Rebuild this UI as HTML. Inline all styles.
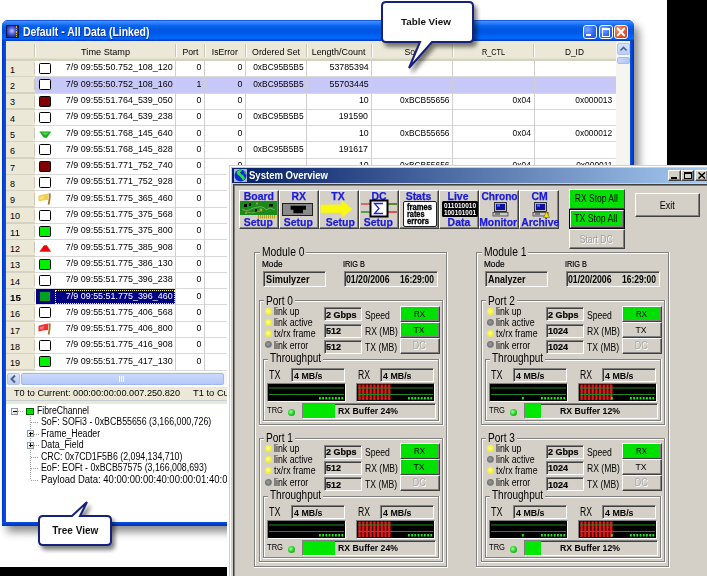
<!DOCTYPE html>
<html><head><meta charset="utf-8"><style>
html,body{margin:0;padding:0}
body{width:707px;height:576px;position:relative;overflow:hidden;background:#fff;font-family:"Liberation Sans",sans-serif}
body div{position:absolute}
.t{white-space:nowrap;line-height:1}
</style></head><body>
<div style="left:667px;top:0px;width:40px;height:165px;background:#000"></div>
<div style="left:0px;top:567px;width:227px;height:9px;background:#000"></div>
<div style="left:2px;top:20px;width:632px;height:506px;border-radius:6px 6px 0 0;box-shadow:5px 6px 9px rgba(0,0,0,0.45);background:#0a47e0"></div>
<div style="left:2px;top:20px;width:632px;height:21px;border-radius:6px 6px 0 0;background:linear-gradient(to bottom,#0a3ed8 0px,#3a90ff 1.5px,#2a80fa 3px,#0a62ec 6px,#0055e2 10px,#0058e6 13px,#0064f6 16px,#0066fa 18.5px,#0048d8 20px,#0038c0 21px)"></div>
<div style="left:2px;top:41px;width:4px;height:485px;background:linear-gradient(to right,#0036c8,#0a52e8)"></div>
<div style="left:630px;top:41px;width:4px;height:485px;background:linear-gradient(to right,#0a52e8,#0030b0)"></div>
<div style="left:2px;top:522px;width:632px;height:4px;background:linear-gradient(to bottom,#0a52e8,#0030b0)"></div>
<div style="left:6px;top:25px;width:12.5px;height:13px;background:radial-gradient(circle at 45% 45%,#c0d0ff 0%,#5868e0 35%,#2030a0 70%,#101c60 100%);border:1px solid #0a1050;box-sizing:border-box"></div>
<div style="left:15.5px;top:26px;width:1.5px;height:11px;background:repeating-linear-gradient(to bottom,#d8c020 0 1.5px,#304080 1.5px 2.5px)"></div>
<div class="t" style="left:22.50px;top:26.12px;font-size:12.5px;font-weight:bold;color:#fff;transform:scaleX(0.834);transform-origin:left;text-shadow:0.6px 0.6px 0 #0a2a90;">Default - All Data (Linked)</div>
<div style="left:583px;top:25px;width:14px;height:14px;border:1px solid #fff;border-radius:3px;box-sizing:border-box;background:radial-gradient(circle at 30% 30%,#7aa8ff,#2a64f0 60%,#1a4cd8)"></div>
<div style="left:586px;top:33.8px;width:5px;height:2.5px;background:#fff"></div>
<div style="left:599px;top:25px;width:13.5px;height:14px;border:1px solid #fff;border-radius:3px;box-sizing:border-box;background:radial-gradient(circle at 30% 30%,#7aa8ff,#2a64f0 60%,#1a4cd8)"></div>
<div style="left:601.5px;top:27.5px;width:8.5px;height:9px;border:1px solid #fff;border-top-width:2.5px;box-sizing:border-box"></div>
<div style="left:614.2px;top:25px;width:13.8px;height:14px;border:1px solid #fff;border-radius:3px;box-sizing:border-box;background:radial-gradient(circle at 30% 30%,#f09878,#e05028 60%,#c83818)"></div>
<svg style="position:absolute;left:614.2px;top:25px" width="14" height="14"><path d="M3.2 3 L10.8 11 M10.8 3 L3.2 11" stroke="#fff" stroke-width="1.9"/></svg>
<div style="left:6px;top:41px;width:624px;height:481px;background:#fff"></div>
<div style="left:6px;top:41px;width:610px;height:20px;background:#ebe8d7;border-bottom:2px solid #d6d2c2;box-sizing:border-box"></div>
<div style="left:6px;top:58px;width:610px;height:1px;background:#e2dfcf"></div>
<div style="left:34px;top:44px;width:1px;height:13px;background:#cac6b4"></div>
<div style="left:35px;top:44px;width:1px;height:13px;background:#fff"></div>
<div style="left:174.5px;top:44px;width:1px;height:13px;background:#cac6b4"></div>
<div style="left:175.5px;top:44px;width:1px;height:13px;background:#fff"></div>
<div style="left:203.5px;top:44px;width:1px;height:13px;background:#cac6b4"></div>
<div style="left:204.5px;top:44px;width:1px;height:13px;background:#fff"></div>
<div style="left:244.5px;top:44px;width:1px;height:13px;background:#cac6b4"></div>
<div style="left:245.5px;top:44px;width:1px;height:13px;background:#fff"></div>
<div style="left:305.5px;top:44px;width:1px;height:13px;background:#cac6b4"></div>
<div style="left:306.5px;top:44px;width:1px;height:13px;background:#fff"></div>
<div style="left:370.5px;top:44px;width:1px;height:13px;background:#cac6b4"></div>
<div style="left:371.5px;top:44px;width:1px;height:13px;background:#fff"></div>
<div style="left:451.5px;top:44px;width:1px;height:13px;background:#cac6b4"></div>
<div style="left:452.5px;top:44px;width:1px;height:13px;background:#fff"></div>
<div style="left:533px;top:44px;width:1px;height:13px;background:#cac6b4"></div>
<div style="left:534px;top:44px;width:1px;height:13px;background:#fff"></div>
<div class="t" style="left:80.63px;top:47.81px;font-size:9.2px;color:#000;transform:scaleX(0.995);transform-origin:center;">Time Stamp</div>
<div class="t" style="left:181.56px;top:47.81px;font-size:9.2px;color:#000;transform:scaleX(0.948);transform-origin:center;">Port</div>
<div class="t" style="left:211.20px;top:47.81px;font-size:9.2px;color:#000;transform:scaleX(0.942);transform-origin:center;">IsError</div>
<div class="t" style="left:250.94px;top:47.81px;font-size:9.2px;color:#000;transform:scaleX(0.958);transform-origin:center;">Ordered Set</div>
<div class="t" style="left:311.38px;top:47.81px;font-size:9.2px;color:#000;transform:scaleX(0.977);transform-origin:center;">Length/Count</div>
<div class="t" style="left:403.56px;top:47.81px;font-size:9.2px;color:#000;transform:scaleX(0.948);transform-origin:center;">SoF</div>
<div class="t" style="left:478.68px;top:47.81px;font-size:9.2px;color:#000;transform:scaleX(0.789);transform-origin:center;">R_CTL</div>
<div class="t" style="left:564.27px;top:47.81px;font-size:9.2px;color:#000;transform:scaleX(0.906);transform-origin:center;">D_ID</div>
<div style="left:6px;top:60.9px;width:29px;height:16.3px;background:#ebe8d7"></div>
<div style="left:6px;top:75.7px;width:29px;height:1.5px;background:#d6d2c2"></div>
<div style="left:34px;top:62.9px;width:1px;height:11.3px;background:#cac6b4"></div>
<div class="t" style="left:10.00px;top:65.78px;font-size:9px;color:#000;">1</div>
<div style="left:35px;top:76.2px;width:581px;height:1px;background:#d9d9d9"></div>
<div style="left:39px;top:62.9px;width:12px;height:11px;background:#fff;border:1.5px solid #000;border-radius:1.5px;box-sizing:border-box"></div>
<div class="t" style="left:57.72px;top:62.37px;font-size:9.6px;color:#000;transform:scaleX(0.932);transform-origin:right;">7/9 09:55:50.752_108_120</div>
<div class="t" style="left:196.16px;top:62.37px;font-size:9.6px;color:#000;transform:scaleX(0.917);transform-origin:right;">0</div>
<div class="t" style="left:237.16px;top:62.37px;font-size:9.6px;color:#000;transform:scaleX(0.917);transform-origin:right;">0</div>
<div class="t" style="left:245.86px;top:62.37px;font-size:9.6px;color:#000;transform:scaleX(0.875);transform-origin:right;">0xBC95B5B5</div>
<div class="t" style="left:325.79px;top:62.37px;font-size:9.6px;color:#000;transform:scaleX(0.917);transform-origin:right;">53785394</div>
<div style="left:6px;top:77.2px;width:29px;height:16.3px;background:#ebe8d7"></div>
<div style="left:6px;top:92.0px;width:29px;height:1.5px;background:#d6d2c2"></div>
<div style="left:34px;top:79.2px;width:1px;height:11.3px;background:#cac6b4"></div>
<div class="t" style="left:10.00px;top:82.08px;font-size:9px;color:#000;">2</div>
<div style="left:35px;top:77.2px;width:581px;height:16.3px;background:#c8c8f8"></div>
<div style="left:35px;top:92.5px;width:581px;height:1px;background:#d9d9d9"></div>
<div style="left:39px;top:79.2px;width:12px;height:11px;background:#fff;border:1.5px solid #000;border-radius:1.5px;box-sizing:border-box"></div>
<div class="t" style="left:57.72px;top:78.67px;font-size:9.6px;color:#000;transform:scaleX(0.932);transform-origin:right;">7/9 09:55:50.752_108_160</div>
<div class="t" style="left:196.16px;top:78.67px;font-size:9.6px;color:#000;transform:scaleX(0.917);transform-origin:right;">1</div>
<div class="t" style="left:237.16px;top:78.67px;font-size:9.6px;color:#000;transform:scaleX(0.917);transform-origin:right;">0</div>
<div class="t" style="left:245.86px;top:78.67px;font-size:9.6px;color:#000;transform:scaleX(0.875);transform-origin:right;">0xBC95B5B5</div>
<div class="t" style="left:325.79px;top:78.67px;font-size:9.6px;color:#000;transform:scaleX(0.917);transform-origin:right;">55703445</div>
<div style="left:6px;top:93.5px;width:29px;height:16.3px;background:#ebe8d7"></div>
<div style="left:6px;top:108.3px;width:29px;height:1.5px;background:#d6d2c2"></div>
<div style="left:34px;top:95.5px;width:1px;height:11.3px;background:#cac6b4"></div>
<div class="t" style="left:10.00px;top:98.38px;font-size:9px;color:#000;">3</div>
<div style="left:35px;top:108.8px;width:581px;height:1px;background:#d9d9d9"></div>
<div style="left:39px;top:95.5px;width:12px;height:11px;background:#800000;border:1.5px solid #000;border-radius:1.5px;box-sizing:border-box"></div>
<div class="t" style="left:57.72px;top:94.97px;font-size:9.6px;color:#000;transform:scaleX(0.932);transform-origin:right;">7/9 09:55:51.764_539_050</div>
<div class="t" style="left:196.16px;top:94.97px;font-size:9.6px;color:#000;transform:scaleX(0.917);transform-origin:right;">0</div>
<div class="t" style="left:237.16px;top:94.97px;font-size:9.6px;color:#000;transform:scaleX(0.917);transform-origin:right;">0</div>
<div class="t" style="left:357.82px;top:94.97px;font-size:9.6px;color:#000;transform:scaleX(0.917);transform-origin:right;">10</div>
<div class="t" style="left:392.92px;top:94.97px;font-size:9.6px;color:#000;transform:scaleX(0.875);transform-origin:right;">0xBCB55656</div>
<div class="t" style="left:510.18px;top:94.97px;font-size:9.6px;color:#000;transform:scaleX(0.875);transform-origin:right;">0x04</div>
<div class="t" style="left:570.33px;top:94.97px;font-size:9.6px;color:#000;transform:scaleX(0.875);transform-origin:right;">0x000013</div>
<div style="left:6px;top:109.80000000000001px;width:29px;height:16.3px;background:#ebe8d7"></div>
<div style="left:6px;top:124.60000000000001px;width:29px;height:1.5px;background:#d6d2c2"></div>
<div style="left:34px;top:111.80000000000001px;width:1px;height:11.3px;background:#cac6b4"></div>
<div class="t" style="left:10.00px;top:114.68px;font-size:9px;color:#000;">4</div>
<div style="left:35px;top:125.10000000000001px;width:581px;height:1px;background:#d9d9d9"></div>
<div style="left:39px;top:111.80000000000001px;width:12px;height:11px;background:#fff;border:1.5px solid #000;border-radius:1.5px;box-sizing:border-box"></div>
<div class="t" style="left:57.72px;top:111.27px;font-size:9.6px;color:#000;transform:scaleX(0.932);transform-origin:right;">7/9 09:55:51.764_539_238</div>
<div class="t" style="left:196.16px;top:111.27px;font-size:9.6px;color:#000;transform:scaleX(0.917);transform-origin:right;">0</div>
<div class="t" style="left:237.16px;top:111.27px;font-size:9.6px;color:#000;transform:scaleX(0.917);transform-origin:right;">0</div>
<div class="t" style="left:245.86px;top:111.27px;font-size:9.6px;color:#000;transform:scaleX(0.875);transform-origin:right;">0xBC95B5B5</div>
<div class="t" style="left:336.46px;top:111.27px;font-size:9.6px;color:#000;transform:scaleX(0.917);transform-origin:right;">191590</div>
<div style="left:6px;top:126.1px;width:29px;height:16.3px;background:#ebe8d7"></div>
<div style="left:6px;top:140.9px;width:29px;height:1.5px;background:#d6d2c2"></div>
<div style="left:34px;top:128.1px;width:1px;height:11.3px;background:#cac6b4"></div>
<div class="t" style="left:10.00px;top:130.98px;font-size:9px;color:#000;">5</div>
<div style="left:35px;top:141.4px;width:581px;height:1px;background:#d9d9d9"></div>
<svg style="position:absolute;left:39px;top:128.6px" width="13" height="12"><path d="M0.8 2.8 L11.8 2.8 L7.8 8.6 L5 8.6 Z" fill="#18a818" stroke="#18a818" stroke-width="0.5" stroke-linejoin="round"/><path d="M2.5 3.6 L10 3.6 L6.5 6.5 Z" fill="#50d850"/></svg>
<div class="t" style="left:57.72px;top:127.57px;font-size:9.6px;color:#000;transform:scaleX(0.932);transform-origin:right;">7/9 09:55:51.768_145_640</div>
<div class="t" style="left:196.16px;top:127.57px;font-size:9.6px;color:#000;transform:scaleX(0.917);transform-origin:right;">0</div>
<div class="t" style="left:237.16px;top:127.57px;font-size:9.6px;color:#000;transform:scaleX(0.917);transform-origin:right;">0</div>
<div class="t" style="left:357.82px;top:127.57px;font-size:9.6px;color:#000;transform:scaleX(0.917);transform-origin:right;">10</div>
<div class="t" style="left:392.92px;top:127.57px;font-size:9.6px;color:#000;transform:scaleX(0.875);transform-origin:right;">0xBCB55656</div>
<div class="t" style="left:510.18px;top:127.57px;font-size:9.6px;color:#000;transform:scaleX(0.875);transform-origin:right;">0x04</div>
<div class="t" style="left:570.33px;top:127.57px;font-size:9.6px;color:#000;transform:scaleX(0.875);transform-origin:right;">0x000012</div>
<div style="left:6px;top:142.4px;width:29px;height:16.3px;background:#ebe8d7"></div>
<div style="left:6px;top:157.20000000000002px;width:29px;height:1.5px;background:#d6d2c2"></div>
<div style="left:34px;top:144.4px;width:1px;height:11.3px;background:#cac6b4"></div>
<div class="t" style="left:10.00px;top:147.28px;font-size:9px;color:#000;">6</div>
<div style="left:35px;top:157.70000000000002px;width:581px;height:1px;background:#d9d9d9"></div>
<div style="left:39px;top:144.4px;width:12px;height:11px;background:#fff;border:1.5px solid #000;border-radius:1.5px;box-sizing:border-box"></div>
<div class="t" style="left:57.72px;top:143.87px;font-size:9.6px;color:#000;transform:scaleX(0.932);transform-origin:right;">7/9 09:55:51.768_145_828</div>
<div class="t" style="left:196.16px;top:143.87px;font-size:9.6px;color:#000;transform:scaleX(0.917);transform-origin:right;">0</div>
<div class="t" style="left:237.16px;top:143.87px;font-size:9.6px;color:#000;transform:scaleX(0.917);transform-origin:right;">0</div>
<div class="t" style="left:245.86px;top:143.87px;font-size:9.6px;color:#000;transform:scaleX(0.875);transform-origin:right;">0xBC95B5B5</div>
<div class="t" style="left:336.46px;top:143.87px;font-size:9.6px;color:#000;transform:scaleX(0.917);transform-origin:right;">191617</div>
<div style="left:6px;top:158.70000000000002px;width:29px;height:16.3px;background:#ebe8d7"></div>
<div style="left:6px;top:173.50000000000003px;width:29px;height:1.5px;background:#d6d2c2"></div>
<div style="left:34px;top:160.70000000000002px;width:1px;height:11.3px;background:#cac6b4"></div>
<div class="t" style="left:10.00px;top:163.58px;font-size:9px;color:#000;">7</div>
<div style="left:35px;top:174.00000000000003px;width:581px;height:1px;background:#d9d9d9"></div>
<div style="left:39px;top:160.70000000000002px;width:12px;height:11px;background:#800000;border:1.5px solid #000;border-radius:1.5px;box-sizing:border-box"></div>
<div class="t" style="left:57.72px;top:160.17px;font-size:9.6px;color:#000;transform:scaleX(0.932);transform-origin:right;">7/9 09:55:51.771_752_740</div>
<div class="t" style="left:196.16px;top:160.17px;font-size:9.6px;color:#000;transform:scaleX(0.917);transform-origin:right;">0</div>
<div class="t" style="left:237.16px;top:160.17px;font-size:9.6px;color:#000;transform:scaleX(0.917);transform-origin:right;">0</div>
<div class="t" style="left:357.82px;top:160.17px;font-size:9.6px;color:#000;transform:scaleX(0.917);transform-origin:right;">10</div>
<div class="t" style="left:392.92px;top:160.17px;font-size:9.6px;color:#000;transform:scaleX(0.875);transform-origin:right;">0xBCB55656</div>
<div class="t" style="left:510.18px;top:160.17px;font-size:9.6px;color:#000;transform:scaleX(0.875);transform-origin:right;">0x04</div>
<div class="t" style="left:571.04px;top:160.17px;font-size:9.6px;color:#000;transform:scaleX(0.875);transform-origin:right;">0x000011</div>
<div style="left:6px;top:175.0px;width:29px;height:16.3px;background:#ebe8d7"></div>
<div style="left:6px;top:189.8px;width:29px;height:1.5px;background:#d6d2c2"></div>
<div style="left:34px;top:177.0px;width:1px;height:11.3px;background:#cac6b4"></div>
<div class="t" style="left:10.00px;top:179.88px;font-size:9px;color:#000;">8</div>
<div style="left:35px;top:190.3px;width:581px;height:1px;background:#d9d9d9"></div>
<div style="left:39px;top:177.0px;width:12px;height:11px;background:#fff;border:1.5px solid #000;border-radius:1.5px;box-sizing:border-box"></div>
<div class="t" style="left:57.72px;top:176.47px;font-size:9.6px;color:#000;transform:scaleX(0.932);transform-origin:right;">7/9 09:55:51.771_752_928</div>
<div class="t" style="left:196.16px;top:176.47px;font-size:9.6px;color:#000;transform:scaleX(0.917);transform-origin:right;">0</div>
<div style="left:6px;top:191.3px;width:29px;height:16.3px;background:#ebe8d7"></div>
<div style="left:6px;top:206.10000000000002px;width:29px;height:1.5px;background:#d6d2c2"></div>
<div style="left:34px;top:193.3px;width:1px;height:11.3px;background:#cac6b4"></div>
<div class="t" style="left:10.00px;top:196.18px;font-size:9px;color:#000;">9</div>
<div style="left:35px;top:206.60000000000002px;width:581px;height:1px;background:#d9d9d9"></div>
<svg style="position:absolute;left:38px;top:192.5px" width="14" height="14"><path d="M0.5 2.8 L5 1.6 L10.5 0.6 L10 7 L5 7.6 L0.5 8.4 Z" fill="#f0d050"/><path d="M2 4 L6 3 L5.5 6 L2 6.5 Z" fill="#fff" opacity="0.35"/><path d="M11.6 0.4 Q12.2 4 10.6 11.5" stroke="#a87420" stroke-width="1.8" fill="none"/></svg>
<div class="t" style="left:57.72px;top:192.77px;font-size:9.6px;color:#000;transform:scaleX(0.932);transform-origin:right;">7/9 09:55:51.775_365_460</div>
<div class="t" style="left:196.16px;top:192.77px;font-size:9.6px;color:#000;transform:scaleX(0.917);transform-origin:right;">0</div>
<div style="left:6px;top:207.60000000000002px;width:29px;height:16.3px;background:#ebe8d7"></div>
<div style="left:6px;top:222.40000000000003px;width:29px;height:1.5px;background:#d6d2c2"></div>
<div style="left:34px;top:209.60000000000002px;width:1px;height:11.3px;background:#cac6b4"></div>
<div class="t" style="left:10.00px;top:212.48px;font-size:9px;color:#000;">10</div>
<div style="left:35px;top:222.90000000000003px;width:581px;height:1px;background:#d9d9d9"></div>
<div style="left:39px;top:209.60000000000002px;width:12px;height:11px;background:#fff;border:1.5px solid #000;border-radius:1.5px;box-sizing:border-box"></div>
<div class="t" style="left:57.72px;top:209.07px;font-size:9.6px;color:#000;transform:scaleX(0.932);transform-origin:right;">7/9 09:55:51.775_375_568</div>
<div class="t" style="left:196.16px;top:209.07px;font-size:9.6px;color:#000;transform:scaleX(0.917);transform-origin:right;">0</div>
<div style="left:6px;top:223.9px;width:29px;height:16.3px;background:#ebe8d7"></div>
<div style="left:6px;top:238.70000000000002px;width:29px;height:1.5px;background:#d6d2c2"></div>
<div style="left:34px;top:225.9px;width:1px;height:11.3px;background:#cac6b4"></div>
<div class="t" style="left:10.00px;top:228.78px;font-size:9px;color:#000;transform:scaleX(1.070);transform-origin:left;">11</div>
<div style="left:35px;top:239.20000000000002px;width:581px;height:1px;background:#d9d9d9"></div>
<div style="left:39px;top:225.9px;width:12px;height:11px;background:#00f000;border:1.5px solid #000;border-radius:1.5px;box-sizing:border-box"></div>
<div class="t" style="left:57.72px;top:225.37px;font-size:9.6px;color:#000;transform:scaleX(0.932);transform-origin:right;">7/9 09:55:51.775_375_800</div>
<div class="t" style="left:196.16px;top:225.37px;font-size:9.6px;color:#000;transform:scaleX(0.917);transform-origin:right;">0</div>
<div style="left:6px;top:240.20000000000002px;width:29px;height:16.3px;background:#ebe8d7"></div>
<div style="left:6px;top:255.0px;width:29px;height:1.5px;background:#d6d2c2"></div>
<div style="left:34px;top:242.20000000000002px;width:1px;height:11.3px;background:#cac6b4"></div>
<div class="t" style="left:10.00px;top:245.08px;font-size:9px;color:#000;">12</div>
<div style="left:35px;top:255.5px;width:581px;height:1px;background:#d9d9d9"></div>
<svg style="position:absolute;left:39px;top:242.70000000000002px" width="13" height="12"><path d="M0.8 8.4 L11.6 8.4 L7.8 2.6 L5 2.6 Z" fill="#e80808" stroke="#e80808" stroke-width="0.5" stroke-linejoin="round"/></svg>
<div class="t" style="left:57.72px;top:241.67px;font-size:9.6px;color:#000;transform:scaleX(0.932);transform-origin:right;">7/9 09:55:51.775_385_908</div>
<div class="t" style="left:196.16px;top:241.67px;font-size:9.6px;color:#000;transform:scaleX(0.917);transform-origin:right;">0</div>
<div style="left:6px;top:256.5px;width:29px;height:16.3px;background:#ebe8d7"></div>
<div style="left:6px;top:271.3px;width:29px;height:1.5px;background:#d6d2c2"></div>
<div style="left:34px;top:258.5px;width:1px;height:11.3px;background:#cac6b4"></div>
<div class="t" style="left:10.00px;top:261.38px;font-size:9px;color:#000;">13</div>
<div style="left:35px;top:271.8px;width:581px;height:1px;background:#d9d9d9"></div>
<div style="left:39px;top:258.5px;width:12px;height:11px;background:#00f000;border:1.5px solid #000;border-radius:1.5px;box-sizing:border-box"></div>
<div class="t" style="left:57.72px;top:257.97px;font-size:9.6px;color:#000;transform:scaleX(0.932);transform-origin:right;">7/9 09:55:51.775_386_130</div>
<div class="t" style="left:196.16px;top:257.97px;font-size:9.6px;color:#000;transform:scaleX(0.917);transform-origin:right;">0</div>
<div style="left:6px;top:272.8px;width:29px;height:16.3px;background:#ebe8d7"></div>
<div style="left:6px;top:287.6px;width:29px;height:1.5px;background:#d6d2c2"></div>
<div style="left:34px;top:274.8px;width:1px;height:11.3px;background:#cac6b4"></div>
<div class="t" style="left:10.00px;top:277.68px;font-size:9px;color:#000;">14</div>
<div style="left:35px;top:288.1px;width:581px;height:1px;background:#d9d9d9"></div>
<div style="left:39px;top:274.8px;width:12px;height:11px;background:#fff;border:1.5px solid #000;border-radius:1.5px;box-sizing:border-box"></div>
<div class="t" style="left:57.72px;top:274.27px;font-size:9.6px;color:#000;transform:scaleX(0.932);transform-origin:right;">7/9 09:55:51.775_396_238</div>
<div class="t" style="left:196.16px;top:274.27px;font-size:9.6px;color:#000;transform:scaleX(0.917);transform-origin:right;">0</div>
<div style="left:6px;top:289.1px;width:29px;height:16.3px;background:#ebe8d7"></div>
<div style="left:6px;top:303.90000000000003px;width:29px;height:1.5px;background:#d6d2c2"></div>
<div style="left:34px;top:291.1px;width:1px;height:11.3px;background:#cac6b4"></div>
<div class="t" style="left:10.00px;top:293.98px;font-size:9px;font-weight:bold;color:#000;transform:scaleX(1.099);transform-origin:left;">15</div>
<div style="left:35px;top:304.40000000000003px;width:581px;height:1px;background:#d9d9d9"></div>
<div style="left:35.5px;top:289.1px;width:140px;height:15.3px;background:#000080"></div>
<div style="left:54.5px;top:289.6px;width:120.5px;height:14.3px;border:1px dotted #ffff80;box-sizing:border-box"></div>
<div style="left:39px;top:291.1px;width:12px;height:11px;background:#00a020;border:1.5px solid #000080;border-radius:1.5px;box-sizing:border-box"></div>
<div class="t" style="left:57.72px;top:290.57px;font-size:9.6px;color:#fff;transform:scaleX(0.932);transform-origin:right;">7/9 09:55:51.775_396_460</div>
<div class="t" style="left:196.16px;top:290.57px;font-size:9.6px;color:#000;transform:scaleX(0.917);transform-origin:right;">0</div>
<div style="left:6px;top:305.4px;width:29px;height:16.3px;background:#ebe8d7"></div>
<div style="left:6px;top:320.2px;width:29px;height:1.5px;background:#d6d2c2"></div>
<div style="left:34px;top:307.4px;width:1px;height:11.3px;background:#cac6b4"></div>
<div class="t" style="left:10.00px;top:310.28px;font-size:9px;color:#000;">16</div>
<div style="left:35px;top:320.7px;width:581px;height:1px;background:#d9d9d9"></div>
<div style="left:39px;top:307.4px;width:12px;height:11px;background:#fff;border:1.5px solid #000;border-radius:1.5px;box-sizing:border-box"></div>
<div class="t" style="left:57.72px;top:306.87px;font-size:9.6px;color:#000;transform:scaleX(0.932);transform-origin:right;">7/9 09:55:51.775_406_568</div>
<div class="t" style="left:196.16px;top:306.87px;font-size:9.6px;color:#000;transform:scaleX(0.917);transform-origin:right;">0</div>
<div style="left:6px;top:321.7px;width:29px;height:16.3px;background:#ebe8d7"></div>
<div style="left:6px;top:336.5px;width:29px;height:1.5px;background:#d6d2c2"></div>
<div style="left:34px;top:323.7px;width:1px;height:11.3px;background:#cac6b4"></div>
<div class="t" style="left:10.00px;top:326.58px;font-size:9px;color:#000;">17</div>
<div style="left:35px;top:337.0px;width:581px;height:1px;background:#d9d9d9"></div>
<svg style="position:absolute;left:38px;top:322.9px" width="14" height="14"><path d="M0.5 2.8 L5 1.6 L10.5 0.6 L10 7 L5 7.6 L0.5 8.4 Z" fill="#f03030"/><path d="M2 4 L6 3 L5.5 6 L2 6.5 Z" fill="#fff" opacity="0.35"/><path d="M11.6 0.4 Q12.2 4 10.6 11.5" stroke="#a87420" stroke-width="1.8" fill="none"/></svg>
<div class="t" style="left:57.72px;top:323.17px;font-size:9.6px;color:#000;transform:scaleX(0.932);transform-origin:right;">7/9 09:55:51.775_406_800</div>
<div class="t" style="left:196.16px;top:323.17px;font-size:9.6px;color:#000;transform:scaleX(0.917);transform-origin:right;">0</div>
<div style="left:6px;top:338.0px;width:29px;height:16.3px;background:#ebe8d7"></div>
<div style="left:6px;top:352.8px;width:29px;height:1.5px;background:#d6d2c2"></div>
<div style="left:34px;top:340.0px;width:1px;height:11.3px;background:#cac6b4"></div>
<div class="t" style="left:10.00px;top:342.88px;font-size:9px;color:#000;">18</div>
<div style="left:35px;top:353.3px;width:581px;height:1px;background:#d9d9d9"></div>
<div style="left:39px;top:340.0px;width:12px;height:11px;background:#fff;border:1.5px solid #000;border-radius:1.5px;box-sizing:border-box"></div>
<div class="t" style="left:57.72px;top:339.47px;font-size:9.6px;color:#000;transform:scaleX(0.932);transform-origin:right;">7/9 09:55:51.775_416_908</div>
<div class="t" style="left:196.16px;top:339.47px;font-size:9.6px;color:#000;transform:scaleX(0.917);transform-origin:right;">0</div>
<div style="left:6px;top:354.3px;width:29px;height:16.3px;background:#ebe8d7"></div>
<div style="left:6px;top:369.1px;width:29px;height:1.5px;background:#d6d2c2"></div>
<div style="left:34px;top:356.3px;width:1px;height:11.3px;background:#cac6b4"></div>
<div class="t" style="left:10.00px;top:359.18px;font-size:9px;color:#000;">19</div>
<div style="left:35px;top:369.6px;width:581px;height:1px;background:#d9d9d9"></div>
<div style="left:39px;top:356.3px;width:12px;height:11px;background:#00f000;border:1.5px solid #000;border-radius:1.5px;box-sizing:border-box"></div>
<div class="t" style="left:57.72px;top:355.77px;font-size:9.6px;color:#000;transform:scaleX(0.932);transform-origin:right;">7/9 09:55:51.775_417_130</div>
<div class="t" style="left:196.16px;top:355.77px;font-size:9.6px;color:#000;transform:scaleX(0.917);transform-origin:right;">0</div>
<div style="left:175.0px;top:61px;width:1px;height:309.7px;background:#d0d0d0"></div>
<div style="left:204.0px;top:61px;width:1px;height:309.7px;background:#d0d0d0"></div>
<div style="left:245.0px;top:61px;width:1px;height:309.7px;background:#d0d0d0"></div>
<div style="left:306.0px;top:61px;width:1px;height:309.7px;background:#d0d0d0"></div>
<div style="left:371.0px;top:61px;width:1px;height:309.7px;background:#d0d0d0"></div>
<div style="left:452.0px;top:61px;width:1px;height:309.7px;background:#d0d0d0"></div>
<div style="left:533.5px;top:61px;width:1px;height:309.7px;background:#d0d0d0"></div>
<div style="left:615.5px;top:61px;width:1px;height:309.7px;background:#d0d0d0"></div>
<div style="left:616px;top:41px;width:14px;height:331px;background:#f6f5ef"></div>
<div style="left:617px;top:43px;width:13px;height:12px;background:linear-gradient(to bottom,#d8e4fe,#b8ccf8);border:1px solid #b0c4f0;border-radius:2px;box-sizing:border-box"></div>
<svg style="position:absolute;left:617px;top:43px" width="13" height="12"><path d="M3.5 7.5 L6.5 4.5 L9.5 7.5" stroke="#4d6185" stroke-width="1.6" fill="none"/></svg>
<div style="left:617px;top:57px;width:13px;height:7px;background:linear-gradient(to right,#c8d8fc,#b4c8f6);border:1px solid #a8bcec;border-radius:2px;box-sizing:border-box"></div>
<div style="left:6px;top:372px;width:610px;height:14px;background:#f6f5ef"></div>
<div style="left:7px;top:373px;width:13px;height:12px;background:linear-gradient(to bottom,#dce6fe,#b8ccf8);border:1px solid #b0c4f0;border-radius:2px;box-sizing:border-box"></div>
<svg style="position:absolute;left:7px;top:373px" width="13" height="12"><path d="M8 2.5 L4.5 6 L8 9.5" stroke="#4d6185" stroke-width="2" fill="none"/></svg>
<div style="left:21px;top:373px;width:203px;height:12px;background:linear-gradient(to bottom,#cbdafd,#b4c8f8);border:1px solid #a0b8ec;border-radius:2px;box-sizing:border-box"></div>
<div style="left:119px;top:376px;width:1px;height:6px;background:#fff"></div>
<div style="left:121px;top:376px;width:1px;height:6px;background:#fff"></div>
<div style="left:123px;top:376px;width:1px;height:6px;background:#fff"></div>
<div style="left:6px;top:385px;width:624px;height:19px;background:#ebe8d7"></div>
<div style="left:6px;top:385px;width:624px;height:1.5px;background:#fff"></div>
<div style="left:6px;top:400px;width:624px;height:1px;background:#c4ccd4"></div>
<div class="t" style="left:14.00px;top:387.96px;font-size:9.5px;color:#000;transform:scaleX(0.964);transform-origin:left;">T0 to Current: 000:00:00:00.007.250.820</div>
<div class="t" style="left:193.00px;top:387.96px;font-size:9.5px;color:#000;transform:scaleX(0.983);transform-origin:left;">T1 to Current</div>
<div style="left:6px;top:404px;width:624px;height:118px;background:#fff"></div>
<div style="left:11px;top:408px;width:7px;height:7px;border:1px solid #8c9aac;background:linear-gradient(135deg,#fff,#d8d8d0);box-sizing:border-box"></div>
<div style="left:12.5px;top:411px;width:4px;height:1px;background:#000"></div>
<div style="left:18px;top:411px;width:5px;height:1px;background:repeating-linear-gradient(to right,#a0a0a0 0 1px,transparent 1px 2px)"></div>
<div style="left:25.5px;top:407.5px;width:8px;height:7px;background:#00e000;border:1px solid #006000;box-sizing:border-box"></div>
<div class="t" style="left:37.00px;top:405.74px;font-size:10px;color:#000;transform:scaleX(0.866);transform-origin:left;">FibreChannel</div>
<div style="left:30px;top:416px;width:1px;height:64px;background:repeating-linear-gradient(to bottom,#a0a0a0 0 1px,transparent 1px 2px)"></div>
<div style="left:31px;top:422.4px;width:8px;height:1px;background:repeating-linear-gradient(to right,#a0a0a0 0 1px,transparent 1px 2px)"></div>
<div class="t" style="left:41.00px;top:417.04px;font-size:10px;color:#000;transform:scaleX(0.880);transform-origin:left;">SoF: SOFi3 - 0xBCB55656 (3,166,000,726)</div>
<div style="left:27px;top:430.4px;width:7px;height:7px;border:1px solid #8c9aac;background:linear-gradient(135deg,#fff,#d8d8d0);box-sizing:border-box"></div>
<div style="left:28.5px;top:433.4px;width:4px;height:1px;background:#000"></div>
<div style="left:30px;top:431.9px;width:1px;height:4px;background:#000"></div>
<div style="left:34px;top:433.9px;width:5px;height:1px;background:repeating-linear-gradient(to right,#a0a0a0 0 1px,transparent 1px 2px)"></div>
<div class="t" style="left:41.00px;top:428.54px;font-size:10px;color:#000;transform:scaleX(0.880);transform-origin:left;">Frame_Header</div>
<div style="left:27px;top:441.9px;width:7px;height:7px;border:1px solid #8c9aac;background:linear-gradient(135deg,#fff,#d8d8d0);box-sizing:border-box"></div>
<div style="left:28.5px;top:444.9px;width:4px;height:1px;background:#000"></div>
<div style="left:30px;top:443.4px;width:1px;height:4px;background:#000"></div>
<div style="left:34px;top:445.4px;width:5px;height:1px;background:repeating-linear-gradient(to right,#a0a0a0 0 1px,transparent 1px 2px)"></div>
<div class="t" style="left:41.00px;top:440.04px;font-size:10px;color:#000;transform:scaleX(0.880);transform-origin:left;">Data_Field</div>
<div style="left:31px;top:456.9px;width:8px;height:1px;background:repeating-linear-gradient(to right,#a0a0a0 0 1px,transparent 1px 2px)"></div>
<div class="t" style="left:41.00px;top:451.54px;font-size:10px;color:#000;transform:scaleX(0.880);transform-origin:left;">CRC: 0x7CD1F5B6 (2,094,134,710)</div>
<div style="left:31px;top:468.4px;width:8px;height:1px;background:repeating-linear-gradient(to right,#a0a0a0 0 1px,transparent 1px 2px)"></div>
<div class="t" style="left:41.00px;top:463.04px;font-size:10px;color:#000;transform:scaleX(0.880);transform-origin:left;">EoF: EOFt - 0xBCB57575 (3,166,008,693)</div>
<div style="left:31px;top:479.9px;width:8px;height:1px;background:repeating-linear-gradient(to right,#a0a0a0 0 1px,transparent 1px 2px)"></div>
<div class="t" style="left:41.00px;top:474.54px;font-size:10px;color:#000;transform:scaleX(0.950);transform-origin:left;">Payload Data: 40:00:00:00:40:00:00:01:40:00</div>
<div style="left:227px;top:165px;width:2px;height:411px;background:#fff"></div>
<div style="left:229px;top:165px;width:478px;height:411px;background:#d4d0c8;border-top:1px solid #d4d0c8;border-left:1px solid #d4d0c8;box-sizing:border-box"></div>
<div style="left:230px;top:166px;width:477px;height:1px;background:#fff"></div>
<div style="left:230px;top:166px;width:1px;height:410px;background:#fff"></div>
<div style="left:232px;top:168px;width:475px;height:15px;background:linear-gradient(to right,#0a246a 0px,#0a246a 20px,#a6caf0 475px)"></div>
<div style="left:234px;top:169px;width:13px;height:13px;background:#a8b8d8"></div>
<svg style="position:absolute;left:234px;top:169px" width="13" height="13"><circle cx="6.5" cy="6.5" r="6" fill="#1028d8"/><path d="M2.5 3 Q4.5 0.8 8 0.8 L7.5 2.5 L6 3 L7 5 L9.5 6.5 L11 9.5 L9 11.5 L7.5 9 L5.5 7 L3.5 5.5 Z" fill="#28e040"/><path d="M9.5 1.5 Q12 3 12.3 6 L11 5 Z" fill="#28e040"/></svg>
<div class="t" style="left:249.00px;top:170.19px;font-size:11px;font-weight:bold;color:#fff;transform:scaleX(0.867);transform-origin:left;">System Overview</div>
<div style="left:668px;top:170px;width:13px;height:11px;background:#d4d0c8;border-top:1px solid #fff;border-left:1px solid #fff;border-right:1px solid #404040;border-bottom:1px solid #404040;box-sizing:border-box"></div>
<div style="left:669px;top:179px;width:11px;height:1px;background:#808080"></div>
<div style="left:679px;top:171px;width:1px;height:9px;background:#808080"></div>
<div style="left:671px;top:177px;width:6px;height:2px;background:#000"></div>
<div style="left:681px;top:170px;width:13px;height:11px;background:#d4d0c8;border-top:1px solid #fff;border-left:1px solid #fff;border-right:1px solid #404040;border-bottom:1px solid #404040;box-sizing:border-box"></div>
<div style="left:682px;top:179px;width:11px;height:1px;background:#808080"></div>
<div style="left:692px;top:171px;width:1px;height:9px;background:#808080"></div>
<div style="left:684px;top:172px;width:8px;height:7px;border:1px solid #000;border-top-width:2px;box-sizing:border-box"></div>
<div style="left:695px;top:170px;width:13px;height:11px;background:#d4d0c8;border-top:1px solid #fff;border-left:1px solid #fff;border-right:1px solid #404040;border-bottom:1px solid #404040;box-sizing:border-box"></div>
<div style="left:696px;top:179px;width:11px;height:1px;background:#808080"></div>
<div style="left:706px;top:171px;width:1px;height:9px;background:#808080"></div>
<svg style="position:absolute;left:698px;top:172px" width="8" height="7"><path d="M0.5 0.5 L7 6.5 M7 0.5 L0.5 6.5" stroke="#000" stroke-width="1.5"/></svg>
<div style="left:232px;top:183px;width:475px;height:1px;background:#d4d0c8"></div>
<div style="left:233px;top:184px;width:474px;height:1px;background:#404040"></div>
<div style="left:233px;top:184px;width:1px;height:392px;background:#404040"></div>
<div style="left:234px;top:185px;width:473px;height:1px;background:#808080"></div>
<div style="left:234px;top:185px;width:1px;height:391px;background:#808080"></div>
<div style="left:238.5px;top:189.5px;width:40px;height:39px;background:#d4d0c8;border-top:1px solid #fff;border-left:1px solid #fff;border-right:1px solid #404040;border-bottom:1px solid #404040;box-sizing:border-box;"></div>
<div style="left:239.5px;top:226.5px;width:38px;height:1px;background:#808080"></div>
<div style="left:276.5px;top:190.5px;width:1px;height:37px;background:#808080"></div>
<div class="t" style="left:242.61px;top:190.69px;font-size:11px;font-weight:bold;color:#1a1ad8;transform:scaleX(0.950);transform-origin:center;-webkit-text-stroke:0.25px #1a1ad8;">Board</div>
<div class="t" style="left:243.22px;top:217.29px;font-size:11px;font-weight:bold;color:#1a1ad8;transform:scaleX(0.950);transform-origin:center;-webkit-text-stroke:0.25px #1a1ad8;">Setup</div>
<div style="left:278.5px;top:189.5px;width:40px;height:39px;background:#d4d0c8;border-top:1px solid #fff;border-left:1px solid #fff;border-right:1px solid #404040;border-bottom:1px solid #404040;box-sizing:border-box;"></div>
<div style="left:279.5px;top:226.5px;width:38px;height:1px;background:#808080"></div>
<div style="left:316.5px;top:190.5px;width:1px;height:37px;background:#808080"></div>
<div class="t" style="left:290.86px;top:190.69px;font-size:11px;font-weight:bold;color:#1a1ad8;transform:scaleX(0.950);transform-origin:center;-webkit-text-stroke:0.25px #1a1ad8;">RX</div>
<div class="t" style="left:283.22px;top:217.29px;font-size:11px;font-weight:bold;color:#1a1ad8;transform:scaleX(0.950);transform-origin:center;-webkit-text-stroke:0.25px #1a1ad8;">Setup</div>
<div style="left:318.5px;top:189.5px;width:40px;height:39px;background:#d4d0c8;border-top:1px solid #fff;border-left:1px solid #fff;border-right:1px solid #404040;border-bottom:1px solid #404040;box-sizing:border-box;"></div>
<div style="left:319.5px;top:226.5px;width:38px;height:1px;background:#808080"></div>
<div style="left:356.5px;top:190.5px;width:1px;height:37px;background:#808080"></div>
<div class="t" style="left:331.47px;top:190.69px;font-size:11px;font-weight:bold;color:#1a1ad8;transform:scaleX(0.950);transform-origin:center;-webkit-text-stroke:0.25px #1a1ad8;">TX</div>
<div class="t" style="left:324.72px;top:217.29px;font-size:11px;font-weight:bold;color:#1a1ad8;transform:scaleX(0.950);transform-origin:center;-webkit-text-stroke:0.25px #1a1ad8;">Setup</div>
<div style="left:358.5px;top:189.5px;width:40px;height:39px;background:#d4d0c8;border-top:1px solid #fff;border-left:1px solid #fff;border-right:1px solid #404040;border-bottom:1px solid #404040;box-sizing:border-box;"></div>
<div style="left:359.5px;top:226.5px;width:38px;height:1px;background:#808080"></div>
<div style="left:396.5px;top:190.5px;width:1px;height:37px;background:#808080"></div>
<div class="t" style="left:370.56px;top:190.69px;font-size:11px;font-weight:bold;color:#1a1ad8;transform:scaleX(0.950);transform-origin:center;-webkit-text-stroke:0.25px #1a1ad8;">DC</div>
<div class="t" style="left:363.22px;top:217.29px;font-size:11px;font-weight:bold;color:#1a1ad8;transform:scaleX(0.950);transform-origin:center;-webkit-text-stroke:0.25px #1a1ad8;">Setup</div>
<div style="left:398.5px;top:189.5px;width:40px;height:39px;background:#d4d0c8;border-top:1px solid #fff;border-left:1px solid #fff;border-right:1px solid #404040;border-bottom:1px solid #404040;box-sizing:border-box;"></div>
<div style="left:399.5px;top:226.5px;width:38px;height:1px;background:#808080"></div>
<div style="left:436.5px;top:190.5px;width:1px;height:37px;background:#808080"></div>
<div class="t" style="left:405.05px;top:190.69px;font-size:11px;font-weight:bold;color:#1a1ad8;transform:scaleX(0.950);transform-origin:center;-webkit-text-stroke:0.25px #1a1ad8;">Stats</div>
<div style="left:438.5px;top:189.5px;width:40px;height:39px;background:#d4d0c8;border-top:1px solid #fff;border-left:1px solid #fff;border-right:1px solid #404040;border-bottom:1px solid #404040;box-sizing:border-box;"></div>
<div style="left:439.5px;top:226.5px;width:38px;height:1px;background:#808080"></div>
<div style="left:476.5px;top:190.5px;width:1px;height:37px;background:#808080"></div>
<div class="t" style="left:447.49px;top:190.69px;font-size:11px;font-weight:bold;color:#1a1ad8;transform:scaleX(0.950);transform-origin:center;-webkit-text-stroke:0.25px #1a1ad8;">Live</div>
<div class="t" style="left:446.58px;top:217.29px;font-size:11px;font-weight:bold;color:#1a1ad8;transform:scaleX(0.950);transform-origin:center;-webkit-text-stroke:0.25px #1a1ad8;">Data</div>
<div style="left:478.5px;top:189.5px;width:40px;height:39px;background:#d4d0c8;border-top:1px solid #fff;border-left:1px solid #fff;border-right:1px solid #404040;border-bottom:1px solid #404040;box-sizing:border-box;"></div>
<div style="left:479.5px;top:226.5px;width:38px;height:1px;background:#808080"></div>
<div style="left:516.5px;top:190.5px;width:1px;height:37px;background:#808080"></div>
<div class="t" style="left:479.95px;top:190.69px;font-size:11px;font-weight:bold;color:#1a1ad8;transform:scaleX(0.921);transform-origin:center;-webkit-text-stroke:0.25px #1a1ad8;">Chrono</div>
<div class="t" style="left:478.34px;top:217.29px;font-size:11px;font-weight:bold;color:#1a1ad8;transform:scaleX(0.942);transform-origin:center;-webkit-text-stroke:0.25px #1a1ad8;">Monitor</div>
<div style="left:518.5px;top:189.5px;width:40px;height:39px;background:#d4d0c8;border-top:1px solid #fff;border-left:1px solid #fff;border-right:1px solid #404040;border-bottom:1px solid #404040;box-sizing:border-box;"></div>
<div style="left:519.5px;top:226.5px;width:38px;height:1px;background:#808080"></div>
<div style="left:556.5px;top:190.5px;width:1px;height:37px;background:#808080"></div>
<div class="t" style="left:530.95px;top:190.69px;font-size:11px;font-weight:bold;color:#1a1ad8;transform:scaleX(0.950);transform-origin:center;-webkit-text-stroke:0.25px #1a1ad8;">CM</div>
<div class="t" style="left:519.82px;top:217.29px;font-size:11px;font-weight:bold;color:#1a1ad8;transform:scaleX(0.942);transform-origin:center;-webkit-text-stroke:0.25px #1a1ad8;">Archive</div>
<div style="left:239.7px;top:200.5px;width:37px;height:14.2px;background:#1a8a1a"></div>
<svg style="position:absolute;left:239.7px;top:200.5px" width="37" height="18"><rect x="4" y="3" width="3" height="3" fill="#000"/><rect x="9" y="2" width="2" height="3" fill="#000"/><rect x="29" y="3" width="4" height="2.5" fill="#000"/><rect x="15" y="8" width="2" height="3" fill="#000"/><path d="M2 8 Q6 11 9 9 T18 6 T26 9 L30 7 L35 9" stroke="#9cc070" stroke-width="0.7" fill="none"/><path d="M6 11 L12 12 L20 10" stroke="#9cc070" stroke-width="0.6" fill="none"/><circle cx="21" cy="9" r="1.4" fill="#c8a040"/><circle cx="17" cy="2.5" r="1" fill="#c8a040"/><circle cx="6" cy="12" r="0.9" fill="#c8a040"/><rect x="17.3" y="14.2" width="19.5" height="3.3" fill="#e8d840"/><path d="M18.5 14.2 L18.5 17.5 M20.5 14.2 L20.5 17.5 M22.5 14.2 L22.5 17.5 M24.5 14.2 L24.5 17.5 M26.5 14.2 L26.5 17.5 M28.5 14.2 L28.5 17.5 M30.5 14.2 L30.5 17.5 M32.5 14.2 L32.5 17.5 M34.5 14.2 L34.5 17.5" stroke="#8a7010" stroke-width="0.6"/></svg>
<div style="left:282px;top:202.8px;width:31.2px;height:13px;background:#8a8a8a;border:1.5px solid #202020;box-sizing:border-box"></div>
<svg style="position:absolute;left:282px;top:202.8px" width="32" height="13"><path d="M8.6 2.8 L23.9 2.8 L23.9 6.8 L21 6.8 L21 10.2 L11.4 10.2 L11.4 6.8 L8.6 6.8 Z" fill="#000"/></svg>
<svg style="position:absolute;left:320px;top:199px" width="38" height="20"><path d="M1 6 L22 6 L22 2 L32 10 L22 18 L22 13.4 L1 13.4 Z" fill="#f8f810" stroke="#f8f810" stroke-width="0.8" stroke-linejoin="round"/></svg>
<svg style="position:absolute;left:360px;top:199px" width="38" height="20"><path d="M1 5 L10 5 M28 5 L37 5" stroke="#e00000" stroke-width="1.2"/><path d="M28 13 L37 13" stroke="#e00000" stroke-width="1.2"/><path d="M1 13 L10 13" stroke="#008000" stroke-width="1.2"/><path d="M28 5 L37 5" stroke="#00a000" stroke-width="1.2"/><rect x="10.5" y="1.5" width="17" height="16" fill="#fff" stroke="#000" stroke-width="2"/><path d="M23 4.5 L14.5 4.5 L19 9.5 L14.5 14.5 L23 14.5" stroke="#2020e0" stroke-width="1.3" fill="none"/></svg>
<div style="left:403px;top:201px;width:34px;height:26px;background:#fff;border:1.5px solid #202020;border-radius:2px;box-sizing:border-box"></div>
<div class="t" style="left:406.50px;top:202.70px;font-size:8.5px;font-weight:bold;color:#000;transform:scaleX(0.897);transform-origin:left;-webkit-text-stroke:0.35px #000;">frames</div>
<div class="t" style="left:406.50px;top:209.50px;font-size:8.5px;font-weight:bold;color:#000;transform:scaleX(0.861);transform-origin:left;-webkit-text-stroke:0.35px #000;">rates</div>
<div class="t" style="left:406.50px;top:216.80px;font-size:8.5px;font-weight:bold;color:#000;transform:scaleX(0.895);transform-origin:left;-webkit-text-stroke:0.35px #000;">errors</div>
<div style="left:442px;top:201.3px;width:36px;height:16px;background:#000;border-radius:1.5px"></div>
<div class="t" style="left:444.00px;top:201.85px;font-size:7.5px;font-weight:bold;color:#fff;transform:scaleX(0.862);transform-origin:left;">011010010</div>
<div class="t" style="left:444.00px;top:208.65px;font-size:7.5px;font-weight:bold;color:#fff;transform:scaleX(0.852);transform-origin:left;">100101001</div>
<svg style="position:absolute;left:492px;top:202px" width="18" height="16"><rect x="2.5" y="0.5" width="12" height="9" fill="#b8b8b8" stroke="#303030" stroke-width="1"/><rect x="4" y="2" width="9" height="6" fill="#1010a0"/><rect x="5" y="2.5" width="3" height="2" fill="#3090ff"/><rect x="1" y="10.5" width="15" height="3.5" fill="#c8c8c8" stroke="#404040" stroke-width="0.8"/><rect x="3" y="11.5" width="5" height="1" fill="#303030"/></svg>
<svg style="position:absolute;left:532px;top:202px" width="18" height="16"><rect x="2.5" y="0.5" width="12" height="9" fill="#b8b8b8" stroke="#303030" stroke-width="1"/><rect x="4" y="2" width="9" height="6" fill="#1010a0"/><rect x="5" y="2.5" width="3" height="2" fill="#3090ff"/><rect x="1" y="10.5" width="15" height="3.5" fill="#c8c8c8" stroke="#404040" stroke-width="0.8"/><rect x="3" y="11.5" width="5" height="1" fill="#303030"/><path d="M11.5 15.5 L14.5 9.5 L17.5 15.5 Z" fill="#f0e000" stroke="#806000" stroke-width="0.6"/></svg>
<div style="left:569px;top:189px;width:56px;height:20px;background:#00e000;border-top:1px solid #fff;border-left:1px solid #fff;border-right:1px solid #404040;border-bottom:1px solid #404040;box-sizing:border-box;"></div>
<div style="left:570px;top:207px;width:54px;height:1px;background:#808080"></div>
<div style="left:623px;top:190px;width:1px;height:18px;background:#808080"></div>
<div class="t" style="left:570.51px;top:193.84px;font-size:10px;color:#000;transform:scaleX(0.850);transform-origin:center;">RX Stop All</div>
<div style="left:569px;top:209px;width:56px;height:20px;background:#000"></div>
<div style="left:570px;top:210px;width:54px;height:18px;background:#00e000;border-top:1px solid #fff;border-left:1px solid #fff;border-right:1px solid #404040;border-bottom:1px solid #404040;box-sizing:border-box;"></div>
<div style="left:571px;top:226px;width:52px;height:1px;background:#808080"></div>
<div style="left:622px;top:211px;width:1px;height:16px;background:#808080"></div>
<div class="t" style="left:571.07px;top:213.84px;font-size:10px;color:#000;transform:scaleX(0.869);transform-origin:center;">TX Stop All</div>
<div style="left:569px;top:229px;width:56px;height:20px;background:#d4d0c8;border-top:1px solid #fff;border-left:1px solid #fff;border-right:1px solid #404040;border-bottom:1px solid #404040;box-sizing:border-box;"></div>
<div style="left:570px;top:247px;width:54px;height:1px;background:#808080"></div>
<div style="left:623px;top:230px;width:1px;height:18px;background:#808080"></div>
<div class="t" style="left:576.83px;top:234.53px;font-size:10px;color:#a0a0a0;transform:scaleX(0.861);transform-origin:center;text-shadow:1px 1px 0 #fff;">Start DC</div>
<div style="left:635px;top:193px;width:65px;height:24px;background:#d4d0c8;border-top:1px solid #fff;border-left:1px solid #fff;border-right:1px solid #404040;border-bottom:1px solid #404040;box-sizing:border-box;"></div>
<div style="left:636px;top:215px;width:63px;height:1px;background:#808080"></div>
<div style="left:698px;top:194px;width:1px;height:22px;background:#808080"></div>
<div class="t" style="left:659.16px;top:200.53px;font-size:10px;color:#000;transform:scaleX(0.900);transform-origin:center;">Exit</div>
<div style="left:254px;top:252px;width:192.5px;height:315px;border:1px solid #808080;box-sizing:border-box"></div>
<div style="left:255px;top:253px;width:190.5px;height:313px;border:1px solid #fff;border-right:none;border-bottom:none;box-sizing:border-box"></div>
<div style="left:254px;top:567px;width:193.5px;height:1px;background:#fff"></div>
<div style="left:446.5px;top:252px;width:1px;height:316px;background:#fff"></div>
<div style="left:259.5px;top:249px;width:46.5px;height:8px;background:#d4d0c8"></div>
<div class="t" style="left:261.50px;top:246.34px;font-size:12px;color:#000;transform:scaleX(0.861);transform-origin:left;">Module 0</div>
<div class="t" style="left:262.00px;top:258.96px;font-size:9.5px;color:#000;transform:scaleX(0.863);transform-origin:left;-webkit-text-stroke:0.2px #000;">Mode</div>
<div style="left:263px;top:271px;width:63px;height:16px;background:#d4d0c8;border-top:1px solid #808080;border-left:1px solid #808080;border-right:1px solid #fff;border-bottom:1px solid #fff;box-sizing:border-box"></div>
<div style="left:264px;top:272px;width:61px;height:1px;background:#404040"></div>
<div style="left:264px;top:272px;width:1px;height:14px;background:#404040"></div>
<div class="t" style="left:265.50px;top:274.54px;font-size:10px;font-weight:bold;color:#000;transform:scaleX(0.921);transform-origin:left;">Simulyzer</div>
<div class="t" style="left:343.00px;top:258.96px;font-size:9.5px;color:#000;transform:scaleX(0.772);transform-origin:left;-webkit-text-stroke:0.2px #000;">IRIG B</div>
<div style="left:344px;top:271px;width:94px;height:15.5px;background:#d4d0c8;border-top:1px solid #808080;border-left:1px solid #808080;border-right:1px solid #fff;border-bottom:1px solid #fff;box-sizing:border-box"></div>
<div style="left:345px;top:272px;width:92px;height:1px;background:#404040"></div>
<div style="left:345px;top:272px;width:1px;height:13.5px;background:#404040"></div>
<div class="t" style="left:346.00px;top:274.54px;font-size:10px;font-weight:bold;color:#000;transform:scaleX(0.869);transform-origin:left;">01/20/2006</div>
<div class="t" style="left:399.50px;top:274.54px;font-size:10px;font-weight:bold;color:#000;transform:scaleX(0.849);transform-origin:left;">16:29:00</div>
<div style="left:258.5px;top:300.3px;width:184px;height:124.7px;border:1px solid #808080;box-sizing:border-box"></div>
<div style="left:259.5px;top:301.3px;width:182px;height:122.7px;border:1px solid #fff;border-right:none;border-bottom:none;box-sizing:border-box"></div>
<div style="left:258.5px;top:425.0px;width:185px;height:1px;background:#fff"></div>
<div style="left:442.5px;top:300.3px;width:1px;height:125.7px;background:#fff"></div>
<div style="left:263.5px;top:297px;width:31px;height:8px;background:#d4d0c8"></div>
<div class="t" style="left:265.50px;top:295.14px;font-size:12px;color:#000;transform:scaleX(0.843);transform-origin:left;">Port 0</div>
<div style="left:265.0px;top:307.5px;width:7px;height:7px;border-radius:50%;background:radial-gradient(circle at 45% 45%,#ffffa0,#f0f030 55%,#e8e860 80%,#f0f0b0)"></div>
<div class="t" style="left:274.00px;top:306.54px;font-size:10px;color:#000;transform:scaleX(0.880);transform-origin:left;">link up</div>
<div style="left:265.0px;top:318.83px;width:7px;height:7px;border-radius:50%;background:radial-gradient(circle at 45% 45%,#ffffa0,#f0f030 55%,#e8e860 80%,#f0f0b0)"></div>
<div class="t" style="left:274.00px;top:317.87px;font-size:10px;color:#000;transform:scaleX(0.880);transform-origin:left;">link active</div>
<div style="left:265.0px;top:330.16px;width:7px;height:7px;border-radius:50%;background:radial-gradient(circle at 45% 45%,#ffffa0,#f0f030 55%,#e8e860 80%,#f0f0b0)"></div>
<div class="t" style="left:274.00px;top:329.20px;font-size:10px;color:#000;transform:scaleX(0.880);transform-origin:left;">tx/rx frame</div>
<div style="left:265.0px;top:341.49px;width:7px;height:7px;border-radius:50%;background:radial-gradient(circle at 45% 45%,#a0a0a0,#707070 55%,#b8b8b8 80%,#d0d0d0)"></div>
<div class="t" style="left:274.00px;top:340.53px;font-size:10px;color:#000;transform:scaleX(0.880);transform-origin:left;">link error</div>
<div style="left:324px;top:307.3px;width:38px;height:14px;background:#d4d0c8;border-top:1px solid #808080;border-left:1px solid #808080;border-right:1px solid #fff;border-bottom:1px solid #fff;box-sizing:border-box"></div>
<div style="left:325px;top:308.3px;width:36px;height:1px;background:#404040"></div>
<div style="left:325px;top:308.3px;width:1px;height:12px;background:#404040"></div>
<div class="t" style="left:325.80px;top:310.06px;font-size:9.5px;font-weight:bold;color:#000;transform:scaleX(0.947);transform-origin:left;-webkit-text-stroke:0.2px #000;">2 Gbps</div>
<div style="left:324px;top:323.5px;width:38px;height:14px;background:#d4d0c8;border-top:1px solid #808080;border-left:1px solid #808080;border-right:1px solid #fff;border-bottom:1px solid #fff;box-sizing:border-box"></div>
<div style="left:325px;top:324.5px;width:36px;height:1px;background:#404040"></div>
<div style="left:325px;top:324.5px;width:1px;height:12px;background:#404040"></div>
<div class="t" style="left:325.80px;top:326.26px;font-size:9.5px;font-weight:bold;color:#000;transform:scaleX(0.947);transform-origin:left;-webkit-text-stroke:0.2px #000;">512</div>
<div style="left:324px;top:339.7px;width:38px;height:14px;background:#d4d0c8;border-top:1px solid #808080;border-left:1px solid #808080;border-right:1px solid #fff;border-bottom:1px solid #fff;box-sizing:border-box"></div>
<div style="left:325px;top:340.7px;width:36px;height:1px;background:#404040"></div>
<div style="left:325px;top:340.7px;width:1px;height:12px;background:#404040"></div>
<div class="t" style="left:325.80px;top:342.46px;font-size:9.5px;font-weight:bold;color:#000;transform:scaleX(0.947);transform-origin:left;-webkit-text-stroke:0.2px #000;">512</div>
<div class="t" style="left:365.00px;top:310.54px;font-size:10px;color:#000;transform:scaleX(0.860);transform-origin:left;">Speed</div>
<div class="t" style="left:365.00px;top:326.74px;font-size:10px;color:#000;transform:scaleX(0.860);transform-origin:left;">RX (MB)</div>
<div class="t" style="left:365.00px;top:342.94px;font-size:10px;color:#000;transform:scaleX(0.860);transform-origin:left;">TX (MB)</div>
<div style="left:400px;top:306px;width:40px;height:16px;background:#00e000;border-top:1px solid #fff;border-left:1px solid #fff;border-right:1px solid #404040;border-bottom:1px solid #404040;box-sizing:border-box;"></div>
<div style="left:401px;top:320px;width:38px;height:1px;background:#808080"></div>
<div style="left:438px;top:307px;width:1px;height:14px;background:#808080"></div>
<div class="t" style="left:412.90px;top:308.96px;font-size:9.5px;color:#000;transform:scaleX(0.833);transform-origin:center;">RX</div>
<div style="left:400px;top:322px;width:40px;height:16px;background:#00e000;border-top:1px solid #fff;border-left:1px solid #fff;border-right:1px solid #404040;border-bottom:1px solid #404040;box-sizing:border-box;"></div>
<div style="left:401px;top:336px;width:38px;height:1px;background:#808080"></div>
<div style="left:438px;top:323px;width:1px;height:14px;background:#808080"></div>
<div class="t" style="left:413.43px;top:324.96px;font-size:9.5px;color:#000;transform:scaleX(0.906);transform-origin:center;">TX</div>
<div style="left:400px;top:338px;width:40px;height:16px;background:#d4d0c8;border-top:1px solid #fff;border-left:1px solid #fff;border-right:1px solid #404040;border-bottom:1px solid #404040;box-sizing:border-box;"></div>
<div style="left:401px;top:352px;width:38px;height:1px;background:#808080"></div>
<div style="left:438px;top:339px;width:1px;height:14px;background:#808080"></div>
<div class="t" style="left:412.28px;top:341.04px;font-size:10px;color:#a8a8a8;transform:scaleX(0.900);transform-origin:center;text-shadow:1px 1px 0 #fff;">DC</div>
<div style="left:263px;top:358.5px;width:175.5px;height:62.3px;border:1px solid #808080;box-sizing:border-box"></div>
<div style="left:264px;top:359.5px;width:173.5px;height:60.3px;border:1px solid #fff;border-right:none;border-bottom:none;box-sizing:border-box"></div>
<div style="left:263px;top:420.8px;width:176.5px;height:1px;background:#fff"></div>
<div style="left:438.5px;top:358.5px;width:1px;height:63.3px;background:#fff"></div>
<div style="left:268px;top:354px;width:55px;height:8px;background:#d4d0c8"></div>
<div class="t" style="left:270.00px;top:352.04px;font-size:12px;color:#000;transform:scaleX(0.831);transform-origin:left;">Throughput</div>
<div class="t" style="left:269.00px;top:368.84px;font-size:12px;color:#000;transform:scaleX(0.750);transform-origin:left;">TX</div>
<div style="left:291px;top:368px;width:54px;height:13.5px;background:#d4d0c8;border-top:1px solid #808080;border-left:1px solid #808080;border-right:1px solid #fff;border-bottom:1px solid #fff;box-sizing:border-box"></div>
<div style="left:292px;top:369px;width:52px;height:1px;background:#404040"></div>
<div style="left:292px;top:369px;width:1px;height:11.5px;background:#404040"></div>
<div class="t" style="left:294.00px;top:370.76px;font-size:9.5px;font-weight:bold;color:#000;transform:scaleX(0.931);transform-origin:left;">4 MB/s</div>
<div class="t" style="left:358.00px;top:368.84px;font-size:12px;color:#000;transform:scaleX(0.720);transform-origin:left;">RX</div>
<div style="left:380px;top:368px;width:54px;height:13.5px;background:#d4d0c8;border-top:1px solid #808080;border-left:1px solid #808080;border-right:1px solid #fff;border-bottom:1px solid #fff;box-sizing:border-box"></div>
<div style="left:381px;top:369px;width:52px;height:1px;background:#404040"></div>
<div style="left:381px;top:369px;width:1px;height:11.5px;background:#404040"></div>
<div class="t" style="left:382.50px;top:370.76px;font-size:9.5px;font-weight:bold;color:#000;transform:scaleX(0.931);transform-origin:left;">4 MB/s</div>
<div style="left:266.5px;top:383px;width:79px;height:18.5px;background:#000;border-top:1px solid #808080;border-left:1px solid #808080;border-right:1px solid #fff;border-bottom:1px solid #fff;box-sizing:border-box"></div>
<svg style="position:absolute;left:266.5px;top:383px" width="79" height="18.5"><rect x="2" y="4.5" width="75" height="1" fill="#208a20"/><rect x="2" y="11" width="75" height="1" fill="#208a20"/><rect x="52.00" y="14.0" width="1.8" height="2.5" fill="#18f018"/><rect x="55.20" y="14.0" width="1.8" height="2.5" fill="#18f018"/><rect x="58.40" y="14.0" width="1.8" height="2.5" fill="#18f018"/><rect x="61.60" y="14.0" width="1.8" height="2.5" fill="#18f018"/><rect x="64.80" y="14.0" width="1.8" height="2.5" fill="#18f018"/><rect x="68.00" y="14.0" width="1.8" height="2.5" fill="#18f018"/><rect x="71.20" y="14.0" width="1.8" height="2.5" fill="#18f018"/><rect x="74.40" y="14.0" width="1.8" height="2.5" fill="#18f018"/></svg>
<div style="left:355.5px;top:383px;width:79px;height:18.5px;background:#000;border-top:1px solid #808080;border-left:1px solid #808080;border-right:1px solid #fff;border-bottom:1px solid #fff;box-sizing:border-box"></div>
<svg style="position:absolute;left:355.5px;top:383px" width="79" height="18.5"><rect x="2" y="1.5" width="33.5" height="15.5" fill="#480000"/><rect x="2.50" y="1.5" width="2.2" height="15.5" fill="#d81c1c"/><rect x="6.20" y="1.5" width="2.2" height="15.5" fill="#d81c1c"/><rect x="9.90" y="1.5" width="2.2" height="15.5" fill="#d81c1c"/><rect x="13.60" y="1.5" width="2.2" height="15.5" fill="#d81c1c"/><rect x="17.30" y="1.5" width="2.2" height="15.5" fill="#d81c1c"/><rect x="21.00" y="1.5" width="2.2" height="15.5" fill="#d81c1c"/><rect x="24.70" y="1.5" width="2.2" height="15.5" fill="#d81c1c"/><rect x="28.40" y="1.5" width="2.2" height="15.5" fill="#d81c1c"/><rect x="32.10" y="1.5" width="2.2" height="15.5" fill="#d81c1c"/><rect x="2" y="4.5" width="75" height="1" fill="#208a20"/><rect x="2" y="11" width="75" height="1" fill="#208a20"/><rect x="52.00" y="14.0" width="1.8" height="2.5" fill="#18f018"/><rect x="55.20" y="14.0" width="1.8" height="2.5" fill="#18f018"/><rect x="58.40" y="14.0" width="1.8" height="2.5" fill="#18f018"/><rect x="61.60" y="14.0" width="1.8" height="2.5" fill="#18f018"/><rect x="64.80" y="14.0" width="1.8" height="2.5" fill="#18f018"/><rect x="68.00" y="14.0" width="1.8" height="2.5" fill="#18f018"/><rect x="71.20" y="14.0" width="1.8" height="2.5" fill="#18f018"/><rect x="74.40" y="14.0" width="1.8" height="2.5" fill="#18f018"/></svg>
<div class="t" style="left:266.50px;top:405.26px;font-size:9.5px;color:#000;transform:scaleX(0.798);transform-origin:left;">TRG</div>
<div style="left:287.5px;top:408.5px;width:7px;height:7px;border-radius:50%;background:radial-gradient(circle at 40% 40%,#a0ffa0,#20d020 50%,#108010)"></div>
<div style="left:301.5px;top:402.5px;width:134px;height:16.5px;background:#d4d0c8;border-top:1px solid #808080;border-left:1px solid #808080;border-right:1px solid #fff;border-bottom:1px solid #fff;box-sizing:border-box"></div>
<div style="left:302.5px;top:403.5px;width:132px;height:1px;background:#404040"></div>
<div style="left:302.5px;top:403.5px;width:1px;height:14.5px;background:#404040"></div>
<div style="left:303px;top:404px;width:32px;height:14px;background:#00e800"></div>
<div class="t" style="left:336.99px;top:406.88px;font-size:9px;font-weight:bold;color:#000;transform:scaleX(0.967);transform-origin:center;">RX Buffer 24%</div>
<div style="left:258.5px;top:437.5px;width:184px;height:124.7px;border:1px solid #808080;box-sizing:border-box"></div>
<div style="left:259.5px;top:438.5px;width:182px;height:122.7px;border:1px solid #fff;border-right:none;border-bottom:none;box-sizing:border-box"></div>
<div style="left:258.5px;top:562.2px;width:185px;height:1px;background:#fff"></div>
<div style="left:442.5px;top:437.5px;width:1px;height:125.7px;background:#fff"></div>
<div style="left:263.5px;top:434.2px;width:31px;height:8px;background:#d4d0c8"></div>
<div class="t" style="left:265.50px;top:432.34px;font-size:12px;color:#000;transform:scaleX(0.843);transform-origin:left;">Port 1</div>
<div style="left:265.0px;top:444.7px;width:7px;height:7px;border-radius:50%;background:radial-gradient(circle at 45% 45%,#ffffa0,#f0f030 55%,#e8e860 80%,#f0f0b0)"></div>
<div class="t" style="left:274.00px;top:443.74px;font-size:10px;color:#000;transform:scaleX(0.880);transform-origin:left;">link up</div>
<div style="left:265.0px;top:456.03px;width:7px;height:7px;border-radius:50%;background:radial-gradient(circle at 45% 45%,#ffffa0,#f0f030 55%,#e8e860 80%,#f0f0b0)"></div>
<div class="t" style="left:274.00px;top:455.06px;font-size:10px;color:#000;transform:scaleX(0.880);transform-origin:left;">link active</div>
<div style="left:265.0px;top:467.36px;width:7px;height:7px;border-radius:50%;background:radial-gradient(circle at 45% 45%,#ffffa0,#f0f030 55%,#e8e860 80%,#f0f0b0)"></div>
<div class="t" style="left:274.00px;top:466.40px;font-size:10px;color:#000;transform:scaleX(0.880);transform-origin:left;">tx/rx frame</div>
<div style="left:265.0px;top:478.69px;width:7px;height:7px;border-radius:50%;background:radial-gradient(circle at 45% 45%,#a0a0a0,#707070 55%,#b8b8b8 80%,#d0d0d0)"></div>
<div class="t" style="left:274.00px;top:477.73px;font-size:10px;color:#000;transform:scaleX(0.880);transform-origin:left;">link error</div>
<div style="left:324px;top:444.5px;width:38px;height:14px;background:#d4d0c8;border-top:1px solid #808080;border-left:1px solid #808080;border-right:1px solid #fff;border-bottom:1px solid #fff;box-sizing:border-box"></div>
<div style="left:325px;top:445.5px;width:36px;height:1px;background:#404040"></div>
<div style="left:325px;top:445.5px;width:1px;height:12px;background:#404040"></div>
<div class="t" style="left:325.80px;top:447.26px;font-size:9.5px;font-weight:bold;color:#000;transform:scaleX(0.947);transform-origin:left;-webkit-text-stroke:0.2px #000;">2 Gbps</div>
<div style="left:324px;top:460.7px;width:38px;height:14px;background:#d4d0c8;border-top:1px solid #808080;border-left:1px solid #808080;border-right:1px solid #fff;border-bottom:1px solid #fff;box-sizing:border-box"></div>
<div style="left:325px;top:461.7px;width:36px;height:1px;background:#404040"></div>
<div style="left:325px;top:461.7px;width:1px;height:12px;background:#404040"></div>
<div class="t" style="left:325.80px;top:463.46px;font-size:9.5px;font-weight:bold;color:#000;transform:scaleX(0.947);transform-origin:left;-webkit-text-stroke:0.2px #000;">512</div>
<div style="left:324px;top:476.9px;width:38px;height:14px;background:#d4d0c8;border-top:1px solid #808080;border-left:1px solid #808080;border-right:1px solid #fff;border-bottom:1px solid #fff;box-sizing:border-box"></div>
<div style="left:325px;top:477.9px;width:36px;height:1px;background:#404040"></div>
<div style="left:325px;top:477.9px;width:1px;height:12px;background:#404040"></div>
<div class="t" style="left:325.80px;top:479.66px;font-size:9.5px;font-weight:bold;color:#000;transform:scaleX(0.947);transform-origin:left;-webkit-text-stroke:0.2px #000;">512</div>
<div class="t" style="left:365.00px;top:447.74px;font-size:10px;color:#000;transform:scaleX(0.860);transform-origin:left;">Speed</div>
<div class="t" style="left:365.00px;top:463.94px;font-size:10px;color:#000;transform:scaleX(0.860);transform-origin:left;">RX (MB)</div>
<div class="t" style="left:365.00px;top:480.13px;font-size:10px;color:#000;transform:scaleX(0.860);transform-origin:left;">TX (MB)</div>
<div style="left:400px;top:443.2px;width:40px;height:16px;background:#00e000;border-top:1px solid #fff;border-left:1px solid #fff;border-right:1px solid #404040;border-bottom:1px solid #404040;box-sizing:border-box;"></div>
<div style="left:401px;top:457.2px;width:38px;height:1px;background:#808080"></div>
<div style="left:438px;top:444.2px;width:1px;height:14px;background:#808080"></div>
<div class="t" style="left:412.90px;top:446.16px;font-size:9.5px;color:#000;transform:scaleX(0.833);transform-origin:center;">RX</div>
<div style="left:400px;top:459.2px;width:40px;height:16px;background:#00e000;border-top:1px solid #fff;border-left:1px solid #fff;border-right:1px solid #404040;border-bottom:1px solid #404040;box-sizing:border-box;"></div>
<div style="left:401px;top:473.2px;width:38px;height:1px;background:#808080"></div>
<div style="left:438px;top:460.2px;width:1px;height:14px;background:#808080"></div>
<div class="t" style="left:413.43px;top:462.16px;font-size:9.5px;color:#000;transform:scaleX(0.906);transform-origin:center;">TX</div>
<div style="left:400px;top:475.2px;width:40px;height:16px;background:#d4d0c8;border-top:1px solid #fff;border-left:1px solid #fff;border-right:1px solid #404040;border-bottom:1px solid #404040;box-sizing:border-box;"></div>
<div style="left:401px;top:489.2px;width:38px;height:1px;background:#808080"></div>
<div style="left:438px;top:476.2px;width:1px;height:14px;background:#808080"></div>
<div class="t" style="left:412.28px;top:478.24px;font-size:10px;color:#a8a8a8;transform:scaleX(0.900);transform-origin:center;text-shadow:1px 1px 0 #fff;">DC</div>
<div style="left:263px;top:495.7px;width:175.5px;height:62.3px;border:1px solid #808080;box-sizing:border-box"></div>
<div style="left:264px;top:496.7px;width:173.5px;height:60.3px;border:1px solid #fff;border-right:none;border-bottom:none;box-sizing:border-box"></div>
<div style="left:263px;top:558.0px;width:176.5px;height:1px;background:#fff"></div>
<div style="left:438.5px;top:495.7px;width:1px;height:63.3px;background:#fff"></div>
<div style="left:268px;top:491.2px;width:55px;height:8px;background:#d4d0c8"></div>
<div class="t" style="left:270.00px;top:489.24px;font-size:12px;color:#000;transform:scaleX(0.831);transform-origin:left;">Throughput</div>
<div class="t" style="left:269.00px;top:506.04px;font-size:12px;color:#000;transform:scaleX(0.750);transform-origin:left;">TX</div>
<div style="left:291px;top:505.2px;width:54px;height:13.5px;background:#d4d0c8;border-top:1px solid #808080;border-left:1px solid #808080;border-right:1px solid #fff;border-bottom:1px solid #fff;box-sizing:border-box"></div>
<div style="left:292px;top:506.2px;width:52px;height:1px;background:#404040"></div>
<div style="left:292px;top:506.2px;width:1px;height:11.5px;background:#404040"></div>
<div class="t" style="left:294.00px;top:507.96px;font-size:9.5px;font-weight:bold;color:#000;transform:scaleX(0.931);transform-origin:left;">4 MB/s</div>
<div class="t" style="left:358.00px;top:506.04px;font-size:12px;color:#000;transform:scaleX(0.720);transform-origin:left;">RX</div>
<div style="left:380px;top:505.2px;width:54px;height:13.5px;background:#d4d0c8;border-top:1px solid #808080;border-left:1px solid #808080;border-right:1px solid #fff;border-bottom:1px solid #fff;box-sizing:border-box"></div>
<div style="left:381px;top:506.2px;width:52px;height:1px;background:#404040"></div>
<div style="left:381px;top:506.2px;width:1px;height:11.5px;background:#404040"></div>
<div class="t" style="left:382.50px;top:507.96px;font-size:9.5px;font-weight:bold;color:#000;transform:scaleX(0.931);transform-origin:left;">4 MB/s</div>
<div style="left:266.5px;top:520.2px;width:79px;height:18.5px;background:#000;border-top:1px solid #808080;border-left:1px solid #808080;border-right:1px solid #fff;border-bottom:1px solid #fff;box-sizing:border-box"></div>
<svg style="position:absolute;left:266.5px;top:520.2px" width="79" height="18.5"><rect x="2" y="4.5" width="75" height="1" fill="#208a20"/><rect x="2" y="11" width="75" height="1" fill="#208a20"/><rect x="52.00" y="14.0" width="1.8" height="2.5" fill="#18f018"/><rect x="55.20" y="14.0" width="1.8" height="2.5" fill="#18f018"/><rect x="58.40" y="14.0" width="1.8" height="2.5" fill="#18f018"/><rect x="61.60" y="14.0" width="1.8" height="2.5" fill="#18f018"/><rect x="64.80" y="14.0" width="1.8" height="2.5" fill="#18f018"/><rect x="68.00" y="14.0" width="1.8" height="2.5" fill="#18f018"/><rect x="71.20" y="14.0" width="1.8" height="2.5" fill="#18f018"/><rect x="74.40" y="14.0" width="1.8" height="2.5" fill="#18f018"/></svg>
<div style="left:355.5px;top:520.2px;width:79px;height:18.5px;background:#000;border-top:1px solid #808080;border-left:1px solid #808080;border-right:1px solid #fff;border-bottom:1px solid #fff;box-sizing:border-box"></div>
<svg style="position:absolute;left:355.5px;top:520.2px" width="79" height="18.5"><rect x="2" y="1.5" width="33.5" height="15.5" fill="#480000"/><rect x="2.50" y="1.5" width="2.2" height="15.5" fill="#d81c1c"/><rect x="6.20" y="1.5" width="2.2" height="15.5" fill="#d81c1c"/><rect x="9.90" y="1.5" width="2.2" height="15.5" fill="#d81c1c"/><rect x="13.60" y="1.5" width="2.2" height="15.5" fill="#d81c1c"/><rect x="17.30" y="1.5" width="2.2" height="15.5" fill="#d81c1c"/><rect x="21.00" y="1.5" width="2.2" height="15.5" fill="#d81c1c"/><rect x="24.70" y="1.5" width="2.2" height="15.5" fill="#d81c1c"/><rect x="28.40" y="1.5" width="2.2" height="15.5" fill="#d81c1c"/><rect x="32.10" y="1.5" width="2.2" height="15.5" fill="#d81c1c"/><rect x="2" y="4.5" width="75" height="1" fill="#208a20"/><rect x="2" y="11" width="75" height="1" fill="#208a20"/><rect x="52.00" y="14.0" width="1.8" height="2.5" fill="#18f018"/><rect x="55.20" y="14.0" width="1.8" height="2.5" fill="#18f018"/><rect x="58.40" y="14.0" width="1.8" height="2.5" fill="#18f018"/><rect x="61.60" y="14.0" width="1.8" height="2.5" fill="#18f018"/><rect x="64.80" y="14.0" width="1.8" height="2.5" fill="#18f018"/><rect x="68.00" y="14.0" width="1.8" height="2.5" fill="#18f018"/><rect x="71.20" y="14.0" width="1.8" height="2.5" fill="#18f018"/><rect x="74.40" y="14.0" width="1.8" height="2.5" fill="#18f018"/></svg>
<div class="t" style="left:266.50px;top:542.46px;font-size:9.5px;color:#000;transform:scaleX(0.798);transform-origin:left;">TRG</div>
<div style="left:287.5px;top:545.7px;width:7px;height:7px;border-radius:50%;background:radial-gradient(circle at 40% 40%,#a0ffa0,#20d020 50%,#108010)"></div>
<div style="left:301.5px;top:539.7px;width:134px;height:16.5px;background:#d4d0c8;border-top:1px solid #808080;border-left:1px solid #808080;border-right:1px solid #fff;border-bottom:1px solid #fff;box-sizing:border-box"></div>
<div style="left:302.5px;top:540.7px;width:132px;height:1px;background:#404040"></div>
<div style="left:302.5px;top:540.7px;width:1px;height:14.5px;background:#404040"></div>
<div style="left:303px;top:541.2px;width:32px;height:14px;background:#00e800"></div>
<div class="t" style="left:336.99px;top:544.08px;font-size:9px;font-weight:bold;color:#000;transform:scaleX(0.967);transform-origin:center;">RX Buffer 24%</div>
<div style="left:476px;top:252px;width:192.5px;height:315px;border:1px solid #808080;box-sizing:border-box"></div>
<div style="left:477px;top:253px;width:190.5px;height:313px;border:1px solid #fff;border-right:none;border-bottom:none;box-sizing:border-box"></div>
<div style="left:476px;top:567px;width:193.5px;height:1px;background:#fff"></div>
<div style="left:668.5px;top:252px;width:1px;height:316px;background:#fff"></div>
<div style="left:481.5px;top:249px;width:46.5px;height:8px;background:#d4d0c8"></div>
<div class="t" style="left:483.50px;top:246.34px;font-size:12px;color:#000;transform:scaleX(0.861);transform-origin:left;">Module 1</div>
<div class="t" style="left:484.00px;top:258.96px;font-size:9.5px;color:#000;transform:scaleX(0.863);transform-origin:left;-webkit-text-stroke:0.2px #000;">Mode</div>
<div style="left:485px;top:271px;width:63px;height:16px;background:#d4d0c8;border-top:1px solid #808080;border-left:1px solid #808080;border-right:1px solid #fff;border-bottom:1px solid #fff;box-sizing:border-box"></div>
<div style="left:486px;top:272px;width:61px;height:1px;background:#404040"></div>
<div style="left:486px;top:272px;width:1px;height:14px;background:#404040"></div>
<div class="t" style="left:487.50px;top:274.54px;font-size:10px;font-weight:bold;color:#000;transform:scaleX(0.900);transform-origin:left;">Analyzer</div>
<div class="t" style="left:565.00px;top:258.96px;font-size:9.5px;color:#000;transform:scaleX(0.772);transform-origin:left;-webkit-text-stroke:0.2px #000;">IRIG B</div>
<div style="left:566px;top:271px;width:94px;height:15.5px;background:#d4d0c8;border-top:1px solid #808080;border-left:1px solid #808080;border-right:1px solid #fff;border-bottom:1px solid #fff;box-sizing:border-box"></div>
<div style="left:567px;top:272px;width:92px;height:1px;background:#404040"></div>
<div style="left:567px;top:272px;width:1px;height:13.5px;background:#404040"></div>
<div class="t" style="left:568.00px;top:274.54px;font-size:10px;font-weight:bold;color:#000;transform:scaleX(0.869);transform-origin:left;">01/20/2006</div>
<div class="t" style="left:621.50px;top:274.54px;font-size:10px;font-weight:bold;color:#000;transform:scaleX(0.849);transform-origin:left;">16:29:00</div>
<div style="left:480.5px;top:300.3px;width:184px;height:124.7px;border:1px solid #808080;box-sizing:border-box"></div>
<div style="left:481.5px;top:301.3px;width:182px;height:122.7px;border:1px solid #fff;border-right:none;border-bottom:none;box-sizing:border-box"></div>
<div style="left:480.5px;top:425.0px;width:185px;height:1px;background:#fff"></div>
<div style="left:664.5px;top:300.3px;width:1px;height:125.7px;background:#fff"></div>
<div style="left:485.5px;top:297px;width:31px;height:8px;background:#d4d0c8"></div>
<div class="t" style="left:487.50px;top:295.14px;font-size:12px;color:#000;transform:scaleX(0.843);transform-origin:left;">Port 2</div>
<div style="left:487.0px;top:307.5px;width:7px;height:7px;border-radius:50%;background:radial-gradient(circle at 45% 45%,#ffffa0,#f0f030 55%,#e8e860 80%,#f0f0b0)"></div>
<div class="t" style="left:496.00px;top:306.54px;font-size:10px;color:#000;transform:scaleX(0.880);transform-origin:left;">link up</div>
<div style="left:487.0px;top:318.83px;width:7px;height:7px;border-radius:50%;background:radial-gradient(circle at 45% 45%,#a0a0a0,#707070 55%,#b8b8b8 80%,#d0d0d0)"></div>
<div class="t" style="left:496.00px;top:317.87px;font-size:10px;color:#000;transform:scaleX(0.880);transform-origin:left;">link active</div>
<div style="left:487.0px;top:330.16px;width:7px;height:7px;border-radius:50%;background:radial-gradient(circle at 45% 45%,#ffffa0,#f0f030 55%,#e8e860 80%,#f0f0b0)"></div>
<div class="t" style="left:496.00px;top:329.20px;font-size:10px;color:#000;transform:scaleX(0.880);transform-origin:left;">tx/rx frame</div>
<div style="left:487.0px;top:341.49px;width:7px;height:7px;border-radius:50%;background:radial-gradient(circle at 45% 45%,#a0a0a0,#707070 55%,#b8b8b8 80%,#d0d0d0)"></div>
<div class="t" style="left:496.00px;top:340.53px;font-size:10px;color:#000;transform:scaleX(0.880);transform-origin:left;">link error</div>
<div style="left:546px;top:307.3px;width:38px;height:14px;background:#d4d0c8;border-top:1px solid #808080;border-left:1px solid #808080;border-right:1px solid #fff;border-bottom:1px solid #fff;box-sizing:border-box"></div>
<div style="left:547px;top:308.3px;width:36px;height:1px;background:#404040"></div>
<div style="left:547px;top:308.3px;width:1px;height:12px;background:#404040"></div>
<div class="t" style="left:547.80px;top:310.06px;font-size:9.5px;font-weight:bold;color:#000;transform:scaleX(0.947);transform-origin:left;-webkit-text-stroke:0.2px #000;">2 Gbps</div>
<div style="left:546px;top:323.5px;width:38px;height:14px;background:#d4d0c8;border-top:1px solid #808080;border-left:1px solid #808080;border-right:1px solid #fff;border-bottom:1px solid #fff;box-sizing:border-box"></div>
<div style="left:547px;top:324.5px;width:36px;height:1px;background:#404040"></div>
<div style="left:547px;top:324.5px;width:1px;height:12px;background:#404040"></div>
<div class="t" style="left:547.80px;top:326.26px;font-size:9.5px;font-weight:bold;color:#000;transform:scaleX(0.947);transform-origin:left;-webkit-text-stroke:0.2px #000;">1024</div>
<div style="left:546px;top:339.7px;width:38px;height:14px;background:#d4d0c8;border-top:1px solid #808080;border-left:1px solid #808080;border-right:1px solid #fff;border-bottom:1px solid #fff;box-sizing:border-box"></div>
<div style="left:547px;top:340.7px;width:36px;height:1px;background:#404040"></div>
<div style="left:547px;top:340.7px;width:1px;height:12px;background:#404040"></div>
<div class="t" style="left:547.80px;top:342.46px;font-size:9.5px;font-weight:bold;color:#000;transform:scaleX(0.947);transform-origin:left;-webkit-text-stroke:0.2px #000;">1024</div>
<div class="t" style="left:587.00px;top:310.54px;font-size:10px;color:#000;transform:scaleX(0.860);transform-origin:left;">Speed</div>
<div class="t" style="left:587.00px;top:326.74px;font-size:10px;color:#000;transform:scaleX(0.860);transform-origin:left;">RX (MB)</div>
<div class="t" style="left:587.00px;top:342.94px;font-size:10px;color:#000;transform:scaleX(0.860);transform-origin:left;">TX (MB)</div>
<div style="left:622px;top:306px;width:40px;height:16px;background:#00e000;border-top:1px solid #fff;border-left:1px solid #fff;border-right:1px solid #404040;border-bottom:1px solid #404040;box-sizing:border-box;"></div>
<div style="left:623px;top:320px;width:38px;height:1px;background:#808080"></div>
<div style="left:660px;top:307px;width:1px;height:14px;background:#808080"></div>
<div class="t" style="left:634.90px;top:308.96px;font-size:9.5px;color:#000;transform:scaleX(0.833);transform-origin:center;">RX</div>
<div style="left:622px;top:322px;width:40px;height:16px;background:#d4d0c8;border-top:1px solid #fff;border-left:1px solid #fff;border-right:1px solid #404040;border-bottom:1px solid #404040;box-sizing:border-box;"></div>
<div style="left:623px;top:336px;width:38px;height:1px;background:#808080"></div>
<div style="left:660px;top:323px;width:1px;height:14px;background:#808080"></div>
<div class="t" style="left:635.43px;top:324.96px;font-size:9.5px;color:#000;transform:scaleX(0.906);transform-origin:center;">TX</div>
<div style="left:622px;top:338px;width:40px;height:16px;background:#d4d0c8;border-top:1px solid #fff;border-left:1px solid #fff;border-right:1px solid #404040;border-bottom:1px solid #404040;box-sizing:border-box;"></div>
<div style="left:623px;top:352px;width:38px;height:1px;background:#808080"></div>
<div style="left:660px;top:339px;width:1px;height:14px;background:#808080"></div>
<div class="t" style="left:634.28px;top:341.04px;font-size:10px;color:#a8a8a8;transform:scaleX(0.900);transform-origin:center;text-shadow:1px 1px 0 #fff;">DC</div>
<div style="left:485px;top:358.5px;width:175.5px;height:62.3px;border:1px solid #808080;box-sizing:border-box"></div>
<div style="left:486px;top:359.5px;width:173.5px;height:60.3px;border:1px solid #fff;border-right:none;border-bottom:none;box-sizing:border-box"></div>
<div style="left:485px;top:420.8px;width:176.5px;height:1px;background:#fff"></div>
<div style="left:660.5px;top:358.5px;width:1px;height:63.3px;background:#fff"></div>
<div style="left:490px;top:354px;width:55px;height:8px;background:#d4d0c8"></div>
<div class="t" style="left:492.00px;top:352.04px;font-size:12px;color:#000;transform:scaleX(0.831);transform-origin:left;">Throughput</div>
<div class="t" style="left:491.00px;top:368.84px;font-size:12px;color:#000;transform:scaleX(0.750);transform-origin:left;">TX</div>
<div style="left:513px;top:368px;width:54px;height:13.5px;background:#d4d0c8;border-top:1px solid #808080;border-left:1px solid #808080;border-right:1px solid #fff;border-bottom:1px solid #fff;box-sizing:border-box"></div>
<div style="left:514px;top:369px;width:52px;height:1px;background:#404040"></div>
<div style="left:514px;top:369px;width:1px;height:11.5px;background:#404040"></div>
<div class="t" style="left:516.00px;top:370.76px;font-size:9.5px;font-weight:bold;color:#000;transform:scaleX(0.931);transform-origin:left;">4 MB/s</div>
<div class="t" style="left:580.00px;top:368.84px;font-size:12px;color:#000;transform:scaleX(0.720);transform-origin:left;">RX</div>
<div style="left:602px;top:368px;width:54px;height:13.5px;background:#d4d0c8;border-top:1px solid #808080;border-left:1px solid #808080;border-right:1px solid #fff;border-bottom:1px solid #fff;box-sizing:border-box"></div>
<div style="left:603px;top:369px;width:52px;height:1px;background:#404040"></div>
<div style="left:603px;top:369px;width:1px;height:11.5px;background:#404040"></div>
<div class="t" style="left:604.50px;top:370.76px;font-size:9.5px;font-weight:bold;color:#000;transform:scaleX(0.931);transform-origin:left;">4 MB/s</div>
<div style="left:488.5px;top:383px;width:79px;height:18.5px;background:#000;border-top:1px solid #808080;border-left:1px solid #808080;border-right:1px solid #fff;border-bottom:1px solid #fff;box-sizing:border-box"></div>
<svg style="position:absolute;left:488.5px;top:383px" width="79" height="18.5"><rect x="2" y="4.5" width="75" height="1" fill="#208a20"/><rect x="2" y="11" width="75" height="1" fill="#208a20"/><rect x="52.00" y="14.0" width="1.8" height="2.5" fill="#18f018"/><rect x="55.20" y="14.0" width="1.8" height="2.5" fill="#18f018"/><rect x="58.40" y="14.0" width="1.8" height="2.5" fill="#18f018"/><rect x="61.60" y="14.0" width="1.8" height="2.5" fill="#18f018"/><rect x="64.80" y="14.0" width="1.8" height="2.5" fill="#18f018"/><rect x="68.00" y="14.0" width="1.8" height="2.5" fill="#18f018"/><rect x="71.20" y="14.0" width="1.8" height="2.5" fill="#18f018"/><rect x="74.40" y="14.0" width="1.8" height="2.5" fill="#18f018"/><rect x="33" y="14.0" width="1.8" height="2.5" fill="#18f018"/></svg>
<div style="left:577.5px;top:383px;width:79px;height:18.5px;background:#000;border-top:1px solid #808080;border-left:1px solid #808080;border-right:1px solid #fff;border-bottom:1px solid #fff;box-sizing:border-box"></div>
<svg style="position:absolute;left:577.5px;top:383px" width="79" height="18.5"><rect x="2" y="1.5" width="33.5" height="15.5" fill="#480000"/><rect x="2.50" y="1.5" width="2.2" height="15.5" fill="#d81c1c"/><rect x="6.20" y="1.5" width="2.2" height="15.5" fill="#d81c1c"/><rect x="9.90" y="1.5" width="2.2" height="15.5" fill="#d81c1c"/><rect x="13.60" y="1.5" width="2.2" height="15.5" fill="#d81c1c"/><rect x="17.30" y="1.5" width="2.2" height="15.5" fill="#d81c1c"/><rect x="21.00" y="1.5" width="2.2" height="15.5" fill="#d81c1c"/><rect x="24.70" y="1.5" width="2.2" height="15.5" fill="#d81c1c"/><rect x="28.40" y="1.5" width="2.2" height="15.5" fill="#d81c1c"/><rect x="32.10" y="1.5" width="2.2" height="15.5" fill="#d81c1c"/><rect x="2" y="4.5" width="75" height="1" fill="#208a20"/><rect x="2" y="11" width="75" height="1" fill="#208a20"/><rect x="52.00" y="14.0" width="1.8" height="2.5" fill="#18f018"/><rect x="55.20" y="14.0" width="1.8" height="2.5" fill="#18f018"/><rect x="58.40" y="14.0" width="1.8" height="2.5" fill="#18f018"/><rect x="61.60" y="14.0" width="1.8" height="2.5" fill="#18f018"/><rect x="64.80" y="14.0" width="1.8" height="2.5" fill="#18f018"/><rect x="68.00" y="14.0" width="1.8" height="2.5" fill="#18f018"/><rect x="71.20" y="14.0" width="1.8" height="2.5" fill="#18f018"/><rect x="74.40" y="14.0" width="1.8" height="2.5" fill="#18f018"/><rect x="33" y="14.0" width="1.8" height="2.5" fill="#18f018"/></svg>
<div class="t" style="left:488.50px;top:405.26px;font-size:9.5px;color:#000;transform:scaleX(0.798);transform-origin:left;">TRG</div>
<div style="left:509.5px;top:408.5px;width:7px;height:7px;border-radius:50%;background:radial-gradient(circle at 40% 40%,#a0ffa0,#20d020 50%,#108010)"></div>
<div style="left:523.5px;top:402.5px;width:134px;height:16.5px;background:#d4d0c8;border-top:1px solid #808080;border-left:1px solid #808080;border-right:1px solid #fff;border-bottom:1px solid #fff;box-sizing:border-box"></div>
<div style="left:524.5px;top:403.5px;width:132px;height:1px;background:#404040"></div>
<div style="left:524.5px;top:403.5px;width:1px;height:14.5px;background:#404040"></div>
<div style="left:525px;top:404px;width:15.5px;height:14px;background:#00e800"></div>
<div class="t" style="left:558.99px;top:406.88px;font-size:9px;font-weight:bold;color:#000;transform:scaleX(0.967);transform-origin:center;">RX Buffer 12%</div>
<div style="left:480.5px;top:437.5px;width:184px;height:124.7px;border:1px solid #808080;box-sizing:border-box"></div>
<div style="left:481.5px;top:438.5px;width:182px;height:122.7px;border:1px solid #fff;border-right:none;border-bottom:none;box-sizing:border-box"></div>
<div style="left:480.5px;top:562.2px;width:185px;height:1px;background:#fff"></div>
<div style="left:664.5px;top:437.5px;width:1px;height:125.7px;background:#fff"></div>
<div style="left:485.5px;top:434.2px;width:31px;height:8px;background:#d4d0c8"></div>
<div class="t" style="left:487.50px;top:432.34px;font-size:12px;color:#000;transform:scaleX(0.843);transform-origin:left;">Port 3</div>
<div style="left:487.0px;top:444.7px;width:7px;height:7px;border-radius:50%;background:radial-gradient(circle at 45% 45%,#ffffa0,#f0f030 55%,#e8e860 80%,#f0f0b0)"></div>
<div class="t" style="left:496.00px;top:443.74px;font-size:10px;color:#000;transform:scaleX(0.880);transform-origin:left;">link up</div>
<div style="left:487.0px;top:456.03px;width:7px;height:7px;border-radius:50%;background:radial-gradient(circle at 45% 45%,#a0a0a0,#707070 55%,#b8b8b8 80%,#d0d0d0)"></div>
<div class="t" style="left:496.00px;top:455.06px;font-size:10px;color:#000;transform:scaleX(0.880);transform-origin:left;">link active</div>
<div style="left:487.0px;top:467.36px;width:7px;height:7px;border-radius:50%;background:radial-gradient(circle at 45% 45%,#ffffa0,#f0f030 55%,#e8e860 80%,#f0f0b0)"></div>
<div class="t" style="left:496.00px;top:466.40px;font-size:10px;color:#000;transform:scaleX(0.880);transform-origin:left;">tx/rx frame</div>
<div style="left:487.0px;top:478.69px;width:7px;height:7px;border-radius:50%;background:radial-gradient(circle at 45% 45%,#a0a0a0,#707070 55%,#b8b8b8 80%,#d0d0d0)"></div>
<div class="t" style="left:496.00px;top:477.73px;font-size:10px;color:#000;transform:scaleX(0.880);transform-origin:left;">link error</div>
<div style="left:546px;top:444.5px;width:38px;height:14px;background:#d4d0c8;border-top:1px solid #808080;border-left:1px solid #808080;border-right:1px solid #fff;border-bottom:1px solid #fff;box-sizing:border-box"></div>
<div style="left:547px;top:445.5px;width:36px;height:1px;background:#404040"></div>
<div style="left:547px;top:445.5px;width:1px;height:12px;background:#404040"></div>
<div class="t" style="left:547.80px;top:447.26px;font-size:9.5px;font-weight:bold;color:#000;transform:scaleX(0.947);transform-origin:left;-webkit-text-stroke:0.2px #000;">2 Gbps</div>
<div style="left:546px;top:460.7px;width:38px;height:14px;background:#d4d0c8;border-top:1px solid #808080;border-left:1px solid #808080;border-right:1px solid #fff;border-bottom:1px solid #fff;box-sizing:border-box"></div>
<div style="left:547px;top:461.7px;width:36px;height:1px;background:#404040"></div>
<div style="left:547px;top:461.7px;width:1px;height:12px;background:#404040"></div>
<div class="t" style="left:547.80px;top:463.46px;font-size:9.5px;font-weight:bold;color:#000;transform:scaleX(0.947);transform-origin:left;-webkit-text-stroke:0.2px #000;">1024</div>
<div style="left:546px;top:476.9px;width:38px;height:14px;background:#d4d0c8;border-top:1px solid #808080;border-left:1px solid #808080;border-right:1px solid #fff;border-bottom:1px solid #fff;box-sizing:border-box"></div>
<div style="left:547px;top:477.9px;width:36px;height:1px;background:#404040"></div>
<div style="left:547px;top:477.9px;width:1px;height:12px;background:#404040"></div>
<div class="t" style="left:547.80px;top:479.66px;font-size:9.5px;font-weight:bold;color:#000;transform:scaleX(0.947);transform-origin:left;-webkit-text-stroke:0.2px #000;">1024</div>
<div class="t" style="left:587.00px;top:447.74px;font-size:10px;color:#000;transform:scaleX(0.860);transform-origin:left;">Speed</div>
<div class="t" style="left:587.00px;top:463.94px;font-size:10px;color:#000;transform:scaleX(0.860);transform-origin:left;">RX (MB)</div>
<div class="t" style="left:587.00px;top:480.13px;font-size:10px;color:#000;transform:scaleX(0.860);transform-origin:left;">TX (MB)</div>
<div style="left:622px;top:443.2px;width:40px;height:16px;background:#00e000;border-top:1px solid #fff;border-left:1px solid #fff;border-right:1px solid #404040;border-bottom:1px solid #404040;box-sizing:border-box;"></div>
<div style="left:623px;top:457.2px;width:38px;height:1px;background:#808080"></div>
<div style="left:660px;top:444.2px;width:1px;height:14px;background:#808080"></div>
<div class="t" style="left:634.90px;top:446.16px;font-size:9.5px;color:#000;transform:scaleX(0.833);transform-origin:center;">RX</div>
<div style="left:622px;top:459.2px;width:40px;height:16px;background:#d4d0c8;border-top:1px solid #fff;border-left:1px solid #fff;border-right:1px solid #404040;border-bottom:1px solid #404040;box-sizing:border-box;"></div>
<div style="left:623px;top:473.2px;width:38px;height:1px;background:#808080"></div>
<div style="left:660px;top:460.2px;width:1px;height:14px;background:#808080"></div>
<div class="t" style="left:635.43px;top:462.16px;font-size:9.5px;color:#000;transform:scaleX(0.906);transform-origin:center;">TX</div>
<div style="left:622px;top:475.2px;width:40px;height:16px;background:#d4d0c8;border-top:1px solid #fff;border-left:1px solid #fff;border-right:1px solid #404040;border-bottom:1px solid #404040;box-sizing:border-box;"></div>
<div style="left:623px;top:489.2px;width:38px;height:1px;background:#808080"></div>
<div style="left:660px;top:476.2px;width:1px;height:14px;background:#808080"></div>
<div class="t" style="left:634.28px;top:478.24px;font-size:10px;color:#a8a8a8;transform:scaleX(0.900);transform-origin:center;text-shadow:1px 1px 0 #fff;">DC</div>
<div style="left:485px;top:495.7px;width:175.5px;height:62.3px;border:1px solid #808080;box-sizing:border-box"></div>
<div style="left:486px;top:496.7px;width:173.5px;height:60.3px;border:1px solid #fff;border-right:none;border-bottom:none;box-sizing:border-box"></div>
<div style="left:485px;top:558.0px;width:176.5px;height:1px;background:#fff"></div>
<div style="left:660.5px;top:495.7px;width:1px;height:63.3px;background:#fff"></div>
<div style="left:490px;top:491.2px;width:55px;height:8px;background:#d4d0c8"></div>
<div class="t" style="left:492.00px;top:489.24px;font-size:12px;color:#000;transform:scaleX(0.831);transform-origin:left;">Throughput</div>
<div class="t" style="left:491.00px;top:506.04px;font-size:12px;color:#000;transform:scaleX(0.750);transform-origin:left;">TX</div>
<div style="left:513px;top:505.2px;width:54px;height:13.5px;background:#d4d0c8;border-top:1px solid #808080;border-left:1px solid #808080;border-right:1px solid #fff;border-bottom:1px solid #fff;box-sizing:border-box"></div>
<div style="left:514px;top:506.2px;width:52px;height:1px;background:#404040"></div>
<div style="left:514px;top:506.2px;width:1px;height:11.5px;background:#404040"></div>
<div class="t" style="left:516.00px;top:507.96px;font-size:9.5px;font-weight:bold;color:#000;transform:scaleX(0.931);transform-origin:left;">4 MB/s</div>
<div class="t" style="left:580.00px;top:506.04px;font-size:12px;color:#000;transform:scaleX(0.720);transform-origin:left;">RX</div>
<div style="left:602px;top:505.2px;width:54px;height:13.5px;background:#d4d0c8;border-top:1px solid #808080;border-left:1px solid #808080;border-right:1px solid #fff;border-bottom:1px solid #fff;box-sizing:border-box"></div>
<div style="left:603px;top:506.2px;width:52px;height:1px;background:#404040"></div>
<div style="left:603px;top:506.2px;width:1px;height:11.5px;background:#404040"></div>
<div class="t" style="left:604.50px;top:507.96px;font-size:9.5px;font-weight:bold;color:#000;transform:scaleX(0.931);transform-origin:left;">4 MB/s</div>
<div style="left:488.5px;top:520.2px;width:79px;height:18.5px;background:#000;border-top:1px solid #808080;border-left:1px solid #808080;border-right:1px solid #fff;border-bottom:1px solid #fff;box-sizing:border-box"></div>
<svg style="position:absolute;left:488.5px;top:520.2px" width="79" height="18.5"><rect x="2" y="4.5" width="75" height="1" fill="#208a20"/><rect x="2" y="11" width="75" height="1" fill="#208a20"/><rect x="52.00" y="14.0" width="1.8" height="2.5" fill="#18f018"/><rect x="55.20" y="14.0" width="1.8" height="2.5" fill="#18f018"/><rect x="58.40" y="14.0" width="1.8" height="2.5" fill="#18f018"/><rect x="61.60" y="14.0" width="1.8" height="2.5" fill="#18f018"/><rect x="64.80" y="14.0" width="1.8" height="2.5" fill="#18f018"/><rect x="68.00" y="14.0" width="1.8" height="2.5" fill="#18f018"/><rect x="71.20" y="14.0" width="1.8" height="2.5" fill="#18f018"/><rect x="74.40" y="14.0" width="1.8" height="2.5" fill="#18f018"/><rect x="33" y="14.0" width="1.8" height="2.5" fill="#18f018"/></svg>
<div style="left:577.5px;top:520.2px;width:79px;height:18.5px;background:#000;border-top:1px solid #808080;border-left:1px solid #808080;border-right:1px solid #fff;border-bottom:1px solid #fff;box-sizing:border-box"></div>
<svg style="position:absolute;left:577.5px;top:520.2px" width="79" height="18.5"><rect x="2" y="1.5" width="33.5" height="15.5" fill="#480000"/><rect x="2.50" y="1.5" width="2.2" height="15.5" fill="#d81c1c"/><rect x="6.20" y="1.5" width="2.2" height="15.5" fill="#d81c1c"/><rect x="9.90" y="1.5" width="2.2" height="15.5" fill="#d81c1c"/><rect x="13.60" y="1.5" width="2.2" height="15.5" fill="#d81c1c"/><rect x="17.30" y="1.5" width="2.2" height="15.5" fill="#d81c1c"/><rect x="21.00" y="1.5" width="2.2" height="15.5" fill="#d81c1c"/><rect x="24.70" y="1.5" width="2.2" height="15.5" fill="#d81c1c"/><rect x="28.40" y="1.5" width="2.2" height="15.5" fill="#d81c1c"/><rect x="32.10" y="1.5" width="2.2" height="15.5" fill="#d81c1c"/><rect x="2" y="4.5" width="75" height="1" fill="#208a20"/><rect x="2" y="11" width="75" height="1" fill="#208a20"/><rect x="52.00" y="14.0" width="1.8" height="2.5" fill="#18f018"/><rect x="55.20" y="14.0" width="1.8" height="2.5" fill="#18f018"/><rect x="58.40" y="14.0" width="1.8" height="2.5" fill="#18f018"/><rect x="61.60" y="14.0" width="1.8" height="2.5" fill="#18f018"/><rect x="64.80" y="14.0" width="1.8" height="2.5" fill="#18f018"/><rect x="68.00" y="14.0" width="1.8" height="2.5" fill="#18f018"/><rect x="71.20" y="14.0" width="1.8" height="2.5" fill="#18f018"/><rect x="74.40" y="14.0" width="1.8" height="2.5" fill="#18f018"/><rect x="33" y="14.0" width="1.8" height="2.5" fill="#18f018"/></svg>
<div class="t" style="left:488.50px;top:542.46px;font-size:9.5px;color:#000;transform:scaleX(0.798);transform-origin:left;">TRG</div>
<div style="left:509.5px;top:545.7px;width:7px;height:7px;border-radius:50%;background:radial-gradient(circle at 40% 40%,#a0ffa0,#20d020 50%,#108010)"></div>
<div style="left:523.5px;top:539.7px;width:134px;height:16.5px;background:#d4d0c8;border-top:1px solid #808080;border-left:1px solid #808080;border-right:1px solid #fff;border-bottom:1px solid #fff;box-sizing:border-box"></div>
<div style="left:524.5px;top:540.7px;width:132px;height:1px;background:#404040"></div>
<div style="left:524.5px;top:540.7px;width:1px;height:14.5px;background:#404040"></div>
<div style="left:525px;top:541.2px;width:15.5px;height:14px;background:#00e800"></div>
<div class="t" style="left:558.99px;top:544.08px;font-size:9px;font-weight:bold;color:#000;transform:scaleX(0.967);transform-origin:center;">RX Buffer 12%</div>
<svg style="position:absolute;left:0;top:0" width="707" height="576">
<defs><filter id="sh" x="-20%" y="-20%" width="150%" height="160%"><feGaussianBlur in="SourceAlpha" stdDeviation="2"/><feOffset dx="3" dy="4"/><feComponentTransfer><feFuncA type="linear" slope="0.5"/></feComponentTransfer><feMerge><feMergeNode/><feMergeNode in="SourceGraphic"/></feMerge></filter></defs>
<path filter="url(#sh)" d="M386 2 L469 2 Q473 2 473 6 L473 38 Q473 42 469 42 L432 42 L409 68 L420 42 L386 42 Q382 42 382 38 L382 6 Q382 2 386 2 Z" fill="#fff" stroke="#16207a" stroke-width="2"/>
<path filter="url(#sh)" d="M43 516 L72 516 L87 502 L80 516 L107 516 Q111 516 111 520 L111 541 Q111 545 107 545 L43 545 Q39 545 39 541 L39 520 Q39 516 43 516 Z" fill="#fff" stroke="#16207a" stroke-width="2"/>
</svg>
<div class="t" style="left:400.63px;top:16.60px;font-size:9.8px;font-weight:bold;color:#111;transform:scaleX(1.005);transform-origin:center;">Table View</div>
<div class="t" style="left:49.92px;top:524.69px;font-size:11px;font-weight:bold;color:#111;transform:scaleX(0.910);transform-origin:center;">Tree View</div>
</body></html>
